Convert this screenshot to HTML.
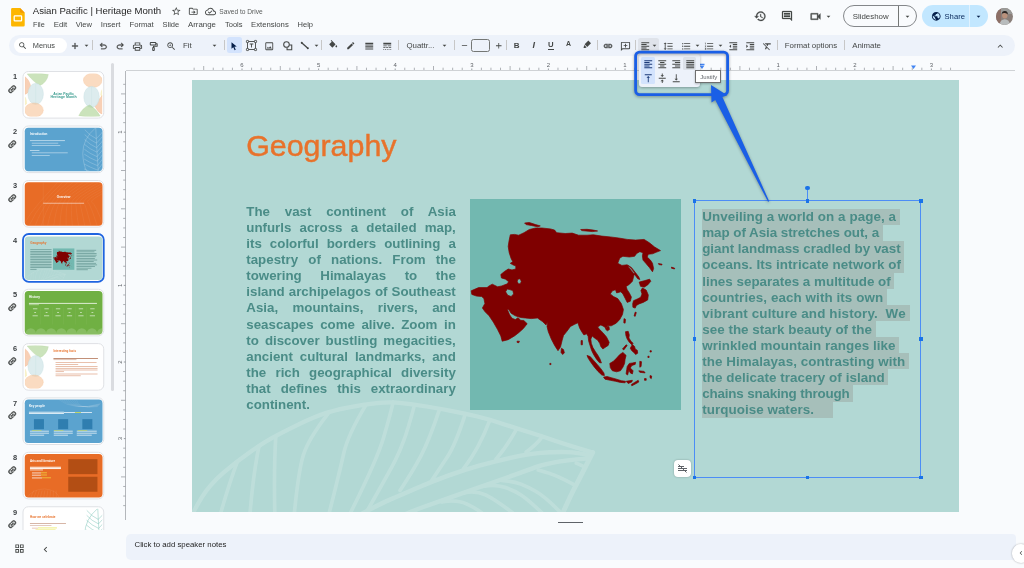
<!DOCTYPE html>
<html lang="en"><head><meta charset="utf-8"><title>Asian Pacific | Heritage Month - Google Slides</title>
<style>
html,body{margin:0;padding:0}
body{width:1024px;height:568px;overflow:hidden;background:#f9fbfd;font-family:"Liberation Sans",sans-serif;position:relative}
.t{position:absolute;white-space:pre;display:block}
.b{position:absolute}
.ic{position:absolute;display:block;overflow:visible}
#app{position:absolute;left:0;top:0;width:1024px;height:568px;overflow:hidden;will-change:transform}
svg text{font-family:"Liberation Sans",sans-serif}
.para{color:#4a8c87;font-weight:bold;white-space:nowrap}
.jl{text-align:justify;text-align-last:justify;height:16.07px}
.jl.last{text-align:left;text-align-last:left}
.num{font-size:7.4px;line-height:9px;color:#3c4043;text-align:center;font-weight:bold}
</style></head>
<body>
<div id="app">
<div id="header">
<svg class="ic" style="left:11.2px;top:8.300px" width="13.800" height="18.500" viewBox="0 0 14 19">
<path d="M1.3 0H9.2L14 4.8V17.7A1.3 1.3 0 0 1 12.7 19H1.3A1.3 1.3 0 0 1 0 17.700V1.300A1.300 1.300 0 0 1 1.300 0Z" fill="#fdb600"/>
<path d="M9.2 0L14 4.8H10.5A1.3 1.3 0 0 1 9.2 3.500Z" fill="#f29900"/>
<rect x="3.2" y="8.200" width="7.6" height="5" rx=".6" fill="none" stroke="#fff" stroke-width="1.300"/>
</svg>
<span class="t" style="left:32.80px;top:6.37px;font-size:9.60px;line-height:9.60px;color:#1f1f1f;">Asian Pacific | Heritage Month</span>
<svg class="ic" style="left:170.95px;top:6.45px" width="10.5" height="10.5" viewBox="0 0 24 24" ><path fill="#444746" d="M22 9.240l-7.190-.62L12 2 9.190 8.630 2 9.240l5.460 4.730L5.820 21 12 17.270 18.180 21l-1.630-7.030L22 9.240zM12 15.400l-3.760 2.270 1-4.280-3.320-2.880 4.380-.38L12 6.100l1.710 4.040 4.380.38-3.320 2.880 1 4.280L12 15.400z"/></svg>
<svg class="ic" style="left:187.75px;top:6.45px" width="10.5" height="10.5" viewBox="0 0 24 24" ><path fill="#444746" d="M20 6h-8l-2-2H4c-1.100 0-2 .9-2 2v12c0 1.100.9 2 2 2h16c1.100 0 2-.9 2-2V8c0-1.100-.9-2-2-2zm0 12H4V6h5.170l2 2H20v10zm-8-1.500l1.400 1.400L17.300 14l-3.900-3.900L12 11.500l1.500 1.500H8v2h5.500z"/></svg>
<svg class="ic" style="left:204.50px;top:6.40px" width="11" height="11" viewBox="0 0 24 24" ><path fill="#444746" d="M19.350 10.040C18.670 6.590 15.640 4 12 4 9.110 4 6.600 5.640 5.350 8.040 2.340 8.360 0 10.910 0 14c0 3.310 2.690 6 6 6h13c2.760 0 5-2.240 5-5 0-2.640-2.050-4.780-4.650-4.960zM19 18H6c-2.210 0-4-1.790-4-4 0-2.050 1.530-3.760 3.560-3.970l1.070-.11.5-.95C8.080 7.140 9.940 6 12 6c2.620 0 4.880 1.860 5.390 4.430l.3 1.500 1.530.11c1.560.1 2.780 1.410 2.780 2.960 0 1.650-1.350 3-3 3zm-9-3.820l-2.090-2.090L6.500 13.500 10 17l6.010-6.010-1.410-1.410z"/></svg>
<span class="t" style="left:219.30px;top:9.39px;font-size:6.63px;line-height:6.63px;color:#5a5d5c;">Saved to Drive</span>
<span class="t" style="left:33.00px;top:21.03px;font-size:7.29px;line-height:7.29px;color:#444746;">File</span>
<span class="t" style="left:53.75px;top:20.57px;font-size:7.83px;line-height:7.83px;color:#444746;">Edit</span>
<span class="t" style="left:75.75px;top:20.80px;font-size:7.56px;line-height:7.56px;color:#444746;">View</span>
<span class="t" style="left:100.75px;top:20.52px;font-size:7.90px;line-height:7.90px;color:#444746;">Insert</span>
<span class="t" style="left:129.50px;top:20.72px;font-size:7.66px;line-height:7.66px;color:#444746;">Format</span>
<span class="t" style="left:162.50px;top:20.82px;font-size:7.53px;line-height:7.53px;color:#444746;">Slide</span>
<span class="t" style="left:188.00px;top:20.54px;font-size:7.87px;line-height:7.87px;color:#444746;">Arrange</span>
<span class="t" style="left:225.00px;top:20.85px;font-size:7.50px;line-height:7.50px;color:#444746;">Tools</span>
<span class="t" style="left:251.00px;top:20.67px;font-size:7.72px;line-height:7.72px;color:#444746;">Extensions</span>
<span class="t" style="left:297.50px;top:20.82px;font-size:7.54px;line-height:7.54px;color:#444746;">Help</span>
<svg class="ic" style="left:754.35px;top:9.75px" width="12.5" height="12.5" viewBox="0 0 24 24" ><path fill="#444746" stroke="#444746" stroke-width="0.6" stroke-linejoin="round" d="M13 3c-4.970 0-9 4.030-9 9H1l3.890 3.890.07.14L9 12H6c0-3.870 3.130-7 7-7s7 3.130 7 7-3.130 7-7 7c-1.930 0-3.680-.79-4.940-2.060l-1.420 1.420C8.270 19.990 10.510 21 13 21c4.970 0 9-4.030 9-9s-4.030-9-9-9zm-1 5v5l4.280 2.540.72-1.210-3.500-2.080V8H12z"/></svg>
<svg class="ic" style="left:781.40px;top:10.30px" width="12" height="12" viewBox="0 0 24 24" ><path fill="#444746" stroke="#444746" stroke-width="0.5" stroke-linejoin="round" d="M21.990 4c0-1.100-.89-2-1.990-2H4c-1.100 0-2 .9-2 2v12c0 1.100.9 2 2 2h14l4 4-.01-18zM20 4v13.170L18.830 16H4V4h16zM6 12h12v2H6zm0-3h12v2H6zm0-3h12v2H6z"/></svg>
<svg class="ic" style="left:809.10px;top:9.50px" width="13" height="13" viewBox="0 0 24 24" ><path fill="#444746" stroke="#444746" stroke-width="0.6" stroke-linejoin="round" d="M15 8v8H5V8h10m1-2H4c-.55 0-1 .45-1 1v10c0 .55.45 1 1 1h12c.55 0 1-.45 1-1v-3.500l4 4v-11l-4 4V7c0-.55-.45-1-1-1z"/></svg>
<svg class="ic" style="left:824.20px;top:11.50px" width="9" height="9" viewBox="0 0 24 24" ><path fill="#444746" d="M7 10l5 5 5-5z"/></svg>
<div class="b" style="left:843.20px;top:5.00px;width:74.30px;height:21.80px;border-radius:11px;border:1px solid #84878a;box-sizing:border-box;"></div>
<div class="b" style="left:897.80px;top:5.50px;width:1.00px;height:20.80px;background:#747775;"></div>
<span class="t" style="left:852.70px;top:12.53px;font-size:7.88px;line-height:7.88px;color:#444746;">Slideshow</span>
<svg class="ic" style="left:902.80px;top:11.50px" width="9" height="9" viewBox="0 0 24 24" ><path fill="#444746" d="M7 10l5 5 5-5z"/></svg>
<div class="b" style="left:921.70px;top:5.00px;width:66.30px;height:21.80px;background:#c2e7ff;border-radius:11px;"></div>
<div class="b" style="left:969.30px;top:5.00px;width:1.00px;height:21.80px;background:#e0f2ff;"></div>
<svg class="ic" style="left:930.75px;top:10.75px" width="10.5" height="10.5" viewBox="0 0 24 24" ><path fill="#041e49" d="M12 2C6.480 2 2 6.480 2 12s4.480 10 10 10 10-4.480 10-10S17.520 2 12 2zm-1 17.930c-3.950-.49-7-3.850-7-7.930 0-.62.08-1.210.21-1.790L9 15v1c0 1.100.9 2 2 2v1.930zm6.900-2.540c-.26-.81-1-1.390-1.900-1.390h-1v-3c0-.55-.45-1-1-1H8v-2h2c.55 0 1-.45 1-1V7h2c1.100 0 2-.9 2-2v-.41c2.930 1.190 5 4.060 5 7.410 0 2.080-.8 3.970-2.100 5.390z"/></svg>
<span class="t" style="left:944.50px;top:12.70px;font-size:7.68px;line-height:7.68px;color:#0a2a5c;">Share</span>
<svg class="ic" style="left:974.00px;top:11.50px" width="9" height="9" viewBox="0 0 24 24" ><path fill="#041e49" d="M7 10l5 5 5-5z"/></svg>
<svg class="ic" style="left:996.2px;top:7.5px" width="17" height="17" viewBox="0 0 17 17">
<defs><clipPath id="av"><circle cx="8.5" cy="8.5" r="8.5"/></clipPath></defs>
<g clip-path="url(#av)"><rect width="17" height="17" fill="#8a7f7a"/>
<rect x="0" y="0" width="17" height="6" fill="#9a9a98"/>
<rect x="0" y="0" width="5" height="17" fill="#8d6f66"/>
<ellipse cx="8.8" cy="7.300" rx="2.700" ry="3.200" fill="#b9917c"/>
<path d="M5.600 6.300Q6 2.800 9 3Q12 3.200 11.800 6.500Q10.500 4.800 8.500 5Q6.500 5 5.600 6.300Z" fill="#2a2523"/>
<path d="M3.500 17Q4 11.500 8.800 11.200Q13.500 11.500 14 17Z" fill="#b8bcbd"/>
</g></svg>
</div>
<div id="toolbar">
<div class="b" style="left:9.00px;top:34.80px;width:1006.40px;height:21.20px;background:#edf2fa;border-radius:10.6px;"></div>
<div class="b" style="left:13.50px;top:37.80px;width:53.00px;height:15.20px;background:#fff;border-radius:7.6px;"></div>
<svg class="ic" style="left:17.85px;top:40.65px" width="9.5" height="9.5" viewBox="0 0 24 24" ><path fill="#444746" d="M15.5 14h-.79l-.28-.27C15.41 12.59 16 11.11 16 9.5 16 5.91 13.09 3 9.5 3S3 5.91 3 9.5 5.91 16 9.5 16c1.61 0 3.09-.59 4.23-1.57l.27.28v.79l5 4.99L20.49 19l-4.99-5zm-6 0C7.01 14 5 11.99 5 9.5S7.01 5 9.5 5 14 7.01 14 9.5 11.99 14 9.5 14z"/></svg>
<span class="t" style="left:32.80px;top:41.94px;font-size:7.40px;line-height:7.40px;color:#444746;">Menus</span>
<svg class="ic" style="left:70.30px;top:40.60px" width="10" height="10" viewBox="0 -960 960 960" ><path fill="#444746" stroke="#444746" stroke-width="30" stroke-linejoin="round" d="M440-440H200v-80h240v-240h80v240h240v80H520v240h-80v-240Z"/></svg>
<svg class="ic" style="left:82.30px;top:41.30px" width="9" height="9" viewBox="0 0 24 24" ><path fill="#444746" d="M7 10l5 5 5-5z"/></svg>
<div class="b" style="left:92.00px;top:40.25px;width:1.00px;height:10.00px;background:#c7c7c7;"></div>
<svg class="ic" style="left:97.75px;top:40.75px" width="10.5" height="10.5" viewBox="0 -960 960 960" ><path fill="#444746" stroke="#444746" stroke-width="20" stroke-linejoin="round" d="M280-200v-80h284q63 0 109.500-40T720-420q0-60-46.500-100T564-560H312l104 104-56 56-200-200 200-200 56 56-104 104h252q97 0 166.500 63T800-420q0 94-69.500 157T564-200H280Z"/></svg>
<svg class="ic" style="left:114.75px;top:40.75px" width="10.5" height="10.5" viewBox="0 -960 960 960" ><path fill="#444746" stroke="#444746" stroke-width="20" stroke-linejoin="round" d="M396-200q-97 0-166.500-63T160-420q0-94 69.500-157T396-640h252L544-744l56-56 200 200-200 200-56-56 104-104H396q-63 0-109.500 40T240-420q0 60 46.500 100T396-280h284v80H396Z"/></svg>
<svg class="ic" style="left:131.50px;top:40.50px" width="11" height="11" viewBox="0 -960 960 960" ><path fill="#444746" d="M640-640v-120H320v120h-80v-200h480v200h-80Zm-480 80h640-640Zm560 100q17 0 28.500-11.500T760-500q0-17-11.500-28.500T720-540q-17 0-28.500 11.500T680-500q0 17 11.500 28.500T720-460Zm-80 260v-160H320v160h320Zm80 80H240v-160H80v-240q0-51 35-85.500t85-34.500h560q51 0 85.500 34.500T880-520v240H720v160Zm80-240v-160q0-17-11.500-28.500T760-560H200q-17 0-28.500 11.500T160-520v160h80v-80h480v80h80Z"/></svg>
<svg class="ic" style="left:148.30px;top:40.60px" width="11" height="11" viewBox="0 0 24 24"><g fill="none" stroke="#444746" stroke-width="2.200" stroke-linejoin="round"><rect x="5" y="3.500" width="12" height="5" rx="1"/><path d="M17 6h3v5.500h-8V14"/><rect x="10.300" y="14" width="3.400" height="6.500" rx=".8"/></g></svg>
<svg class="ic" style="left:165.95px;top:40.75px" width="10.5" height="10.5" viewBox="0 0 24 24" ><path fill="#444746" d="M15.5 14h-.79l-.28-.27C15.41 12.59 16 11.11 16 9.5 16 5.91 13.09 3 9.5 3S3 5.91 3 9.5 5.91 16 9.5 16c1.61 0 3.09-.59 4.23-1.57l.27.28v.79l5 4.99L20.49 19l-4.99-5zm-6 0C7.01 14 5 11.99 5 9.5S7.01 5 9.5 5 14 7.01 14 9.5 11.99 14 9.5 14zm2.500-4h-2v2H9v-2H7V9h2V7h1v2h2v1z"/></svg>
<span class="t" style="left:183.00px;top:42.13px;font-size:7.88px;line-height:7.88px;color:#444746;">Fit</span>
<svg class="ic" style="left:210.30px;top:41.30px" width="9" height="9" viewBox="0 0 24 24" ><path fill="#444746" d="M7 10l5 5 5-5z"/></svg>
<div class="b" style="left:224.00px;top:40.25px;width:1.00px;height:10.00px;background:#c7c7c7;"></div>
<div class="b" style="left:226.80px;top:37.00px;width:15.70px;height:16.00px;background:#d3e3fd;border-radius:2.5px;"></div>
<svg class="ic" style="left:229.30px;top:40.80px" width="10" height="10" viewBox="0 0 24 24" ><path fill="#041e49" d="M6 3l12.5 10.2-5.6.5 3.3 7-2.7 1.3-3.2-7.1L6 18.800z"/></svg>
<svg class="ic" style="left:246.3px;top:40.3px" width="11" height="11" viewBox="0 0 11 11"><g fill="none" stroke="#444746" stroke-width=".9">
<rect x="1.500" y="1.500" width="8" height="8"/></g><g fill="#edf2fa" stroke="#444746" stroke-width=".8"><rect x=".4" y=".4" width="2.200" height="2.200" rx=".5"/><rect x="8.400" y=".4" width="2.200" height="2.200" rx=".5"/><rect x=".4" y="8.400" width="2.200" height="2.200" rx=".5"/><rect x="8.400" y="8.400" width="2.200" height="2.200" rx=".5"/></g>
<path fill="#444746" d="M3.700 3.600h3.600v.9H5.950v3H5.050v-3H3.700z"/></svg>
<svg class="ic" style="left:264.05px;top:40.55px" width="10.5" height="10.5" viewBox="0 0 24 24" ><path fill="#444746" d="M19 5v14H5V5h14m0-2H5c-1.100 0-2 .9-2 2v14c0 1.100.9 2 2 2h14c1.100 0 2-.9 2-2V5c0-1.100-.9-2-2-2zm-4.860 8.860l-3 3.870L9 13.140 6 17h12l-3.860-5.140z"/></svg>
<svg class="ic" style="left:282.800px;top:41px" width="9.800" height="9.800" viewBox="0 0 23 23"><g fill="none" stroke="#444746" stroke-width="2.500">
<circle cx="8.200" cy="8.200" r="6.600"/><path d="M15.500 9.500H20.500V20.500H9.500V15.800"/></g></svg>
<svg class="ic" style="left:300px;top:41px" width="10" height="10" viewBox="0 0 10 10"><path d="M1.700 1.700L7.800 7.300" stroke="#444746" stroke-width="1.300" stroke-linecap="round"/><circle cx="1.700" cy="1.700" r=".95" fill="#444746"/><circle cx="7.800" cy="7.300" r=".95" fill="#444746"/></svg>
<svg class="ic" style="left:311.80px;top:41.30px" width="9" height="9" viewBox="0 0 24 24" ><path fill="#444746" d="M7 10l5 5 5-5z"/></svg>
<div class="b" style="left:321.00px;top:40.25px;width:1.00px;height:10.00px;background:#c7c7c7;"></div>
<svg class="ic" style="left:327.55px;top:40.05px" width="10.5" height="10.5" viewBox="0 0 24 24"><path fill="#444746" d="M16.560 8.940L7.620 0 6.210 1.410l2.380 2.380-5.150 5.150c-.59.59-.59 1.540 0 2.120l5.500 5.500c.29.29.68.44 1.060.44s.77-.15 1.060-.44l5.500-5.500c.59-.58.59-1.530 0-2.120zM19 11.500s-2 2.170-2 3.500c0 1.100.9 2 2 2s2-.9 2-2c0-1.330-2-3.500-2-3.500z"/></svg>
<svg class="ic" style="left:346.05px;top:40.65px" width="9.5" height="9.5" viewBox="0 0 24 24" ><path fill="#444746" d="M3 17.250V21h3.750L17.810 9.940l-3.750-3.750L3 17.250zM20.710 7.040c.39-.39.39-1.020 0-1.410l-2.340-2.340c-.39-.39-1.020-.39-1.410 0l-1.830 1.830 3.750 3.750 1.830-1.830z"/></svg>
<svg class="ic" style="left:363.75px;top:40.55px" width="10.5" height="10.5" viewBox="0 0 24 24" ><path fill="#444746" d="M3 17h18v-2H3v2zm0 3h18v-1H3v1zm0-7h18v-3H3v3zm0-9v4h18V4H3z"/></svg>
<svg class="ic" style="left:381.75px;top:40.55px" width="10.5" height="10.5" viewBox="0 0 24 24" ><path fill="#444746" d="M3 16h5v-2H3v2zm6.500 0h5v-2h-5v2zm6.500 0h5v-2h-5v2zM3 20h2v-2H3v2zm4 0h2v-2H7v2zm4 0h2v-2h-2v2zm4 0h2v-2h-2v2zm4 0h2v-2h-2v2zM3 12h8v-2H3v2zm10 0h8v-2h-8v2zM3 4v4h18V4H3z"/></svg>
<div class="b" style="left:397.80px;top:40.25px;width:1.00px;height:10.00px;background:#c7c7c7;"></div>
<span class="t" style="left:406.50px;top:42.14px;font-size:7.87px;line-height:7.87px;color:#444746;">Quattr...</span>
<svg class="ic" style="left:439.80px;top:41.30px" width="9" height="9" viewBox="0 0 24 24" ><path fill="#444746" d="M7 10l5 5 5-5z"/></svg>
<div class="b" style="left:454.00px;top:40.25px;width:1.00px;height:10.00px;background:#c7c7c7;"></div>
<svg class="ic" style="left:460.00px;top:41.10px" width="9" height="9" viewBox="0 0 24 24" ><path fill="#444746" d="M19 13H5v-2h14v2z"/></svg>
<div class="b" style="left:471.20px;top:39.00px;width:18.60px;height:12.60px;border-radius:2.5px;border:1px solid #747775;box-sizing:border-box;"></div>
<svg class="ic" style="left:493.75px;top:40.85px" width="9.5" height="9.5" viewBox="0 -960 960 960" ><path fill="#444746" d="M440-440H200v-80h240v-240h80v240h240v80H520v240h-80v-240Z"/></svg>
<div class="b" style="left:505.80px;top:40.25px;width:1.00px;height:10.00px;background:#c7c7c7;"></div>
<span class="t" style="left:513.80px;top:41.50px;font-size:8.03px;line-height:8.03px;color:#444746;font-weight:bold;">B</span>
<span class="t" style="left:532.50px;top:40.69px;font-size:8.99px;line-height:8.99px;color:#444746;font-weight:bold;font-style:italic;">I</span>
<span class="t" style="left:548.00px;top:41.04px;font-size:7.75px;line-height:7.75px;color:#444746;font-weight:bold;">U</span>
<div class="b" style="left:547.60px;top:49.00px;width:6.40px;height:1.00px;background:#444746;"></div>
<span class="t" style="left:566.00px;top:41.14px;font-size:6.92px;line-height:6.92px;color:#444746;font-weight:bold;">A</span>
<svg class="ic" style="left:581.55px;top:39.35px" width="10.5" height="10.5" viewBox="0 0 24 24"><path fill="#444746" d="M14.500 3.500l6 6-8.500 8.500-6-6z"/><path fill="#444746" d="M5 13.500l5.500 5.500-3 1.500H3.500z"/></svg>
<div class="b" style="left:597.00px;top:40.25px;width:1.00px;height:10.00px;background:#c7c7c7;"></div>
<svg class="ic" style="left:602.80px;top:40.70px" width="10" height="10" viewBox="0 0 24 24" ><path fill="#444746" stroke="#444746" stroke-width="0.9" stroke-linejoin="round" d="M3.900 12c0-1.710 1.390-3.100 3.100-3.100h4V7H7c-2.760 0-5 2.240-5 5s2.240 5 5 5h4v-1.900H7c-1.710 0-3.100-1.390-3.100-3.100zM8 13h8v-2H8v2zm9-6h-4v1.900h4c1.710 0 3.100 1.390 3.100 3.100s-1.390 3.100-3.100 3.100h-4V17h4c2.760 0 5-2.240 5-5s-2.240-5-5-5z"/></svg>
<svg class="ic" style="left:619.50px;top:40.50px" width="11" height="11" viewBox="0 0 24 24" ><path fill="#444746" d="M20 2H4c-1.100 0-2 .9-2 2v18l4-4h14c1.100 0 2-.9 2-2V4c0-1.100-.9-2-2-2zm0 14H5.170L4 17.170V4h16v12zM11 14h2v-3h3V9h-3V6h-2v3H8v2h3z"/></svg>
<div class="b" style="left:635.30px;top:40.25px;width:1.00px;height:10.00px;background:#c7c7c7;"></div>
<div class="b" style="left:638.00px;top:37.50px;width:20.50px;height:15.50px;background:#dfe3ea;border-radius:2.5px;"></div>
<svg class="ic" style="left:639.55px;top:40.75px" width="10.5" height="10.5" viewBox="0 0 24 24" ><path fill="#444746" d="M15 15H3v2h12v-2zm0-8H3v2h12V7zM3 13h18v-2H3v2zm0 8h18v-2H3v2zM3 3v2h18V3H3z"/></svg>
<svg class="ic" style="left:650.00px;top:41.30px" width="9" height="9" viewBox="0 0 24 24" ><path fill="#444746" d="M7 10l5 5 5-5z"/></svg>
<svg class="ic" style="left:663.05px;top:40.75px" width="10.5" height="10.5" viewBox="0 0 24 24" ><path fill="#444746" d="M6 7h2.500L5 3.500 1.500 7H4v10H1.500L5 20.500 8.500 17H6V7zm4-2v2h12V5H10zm0 14h12v-2H10v2zm0-6h12v-2H10v2z"/></svg>
<svg class="ic" style="left:680.55px;top:40.75px" width="10.5" height="10.5" viewBox="0 0 24 24" ><path fill="#444746" d="M4 10.500c-.83 0-1.500.67-1.500 1.500s.67 1.500 1.500 1.500 1.500-.67 1.500-1.500-.67-1.500-1.500-1.500zm0-6c-.83 0-1.500.67-1.500 1.500S3.170 7.500 4 7.500 5.500 6.830 5.500 6 4.830 4.500 4 4.500zm0 12c-.83 0-1.500.68-1.500 1.500s.68 1.500 1.500 1.500 1.500-.68 1.500-1.500-.67-1.500-1.500-1.500zM7 19h14v-2H7v2zm0-6h14v-2H7v2zm0-8v2h14V5H7z"/></svg>
<svg class="ic" style="left:692.50px;top:41.30px" width="9" height="9" viewBox="0 0 24 24" ><path fill="#444746" d="M7 10l5 5 5-5z"/></svg>
<svg class="ic" style="left:704.05px;top:40.75px" width="10.5" height="10.5" viewBox="0 0 24 24" ><path fill="#444746" d="M2 17h2v.5H3v1h1v.5H2v1h3v-4H2v1zm1-9h1V4H2v1h1v3zm-1 3h1.800L2 13.100v.9h3v-1H3.200L5 10.900V10H2v1zm5-6v2h14V5H7zm0 14h14v-2H7v2zm0-6h14v-2H7v2z"/></svg>
<svg class="ic" style="left:716.00px;top:41.30px" width="9" height="9" viewBox="0 0 24 24" ><path fill="#444746" d="M7 10l5 5 5-5z"/></svg>
<svg class="ic" style="left:727.55px;top:40.75px" width="10.5" height="10.5" viewBox="0 0 24 24" ><path fill="#444746" d="M11 17h10v-2H11v2zm-8-5l4 4V8l-4 4zm0 9h18v-2H3v2zM3 3v2h18V3H3zm8 6h10V7H11v2zm0 4h10v-2H11v2z"/></svg>
<svg class="ic" style="left:744.55px;top:40.75px" width="10.5" height="10.5" viewBox="0 0 24 24" ><path fill="#444746" d="M3 21h18v-2H3v2zM3 8v8l4-4-4-4zm8 9h10v-2H11v2zM3 3v2h18V3H3zm8 6h10V7H11v2zm0 4h10v-2H11v2z"/></svg>
<svg class="ic" style="left:761.55px;top:40.75px" width="10.5" height="10.5" viewBox="0 0 24 24" ><path fill="#444746" d="M3.270 5L2 6.270l6.970 6.970L6.500 19h3l1.570-3.660L16.730 21 18 19.730 3.550 5.270 3.270 5zM6 5v.18L8.820 8h2.400l-.72 1.680 2.100 2.100L14.210 8H20V5H6z"/></svg>
<div class="b" style="left:777.00px;top:40.25px;width:1.00px;height:10.00px;background:#c7c7c7;"></div>
<span class="t" style="left:784.75px;top:42.14px;font-size:7.87px;line-height:7.87px;color:#444746;">Format options</span>
<div class="b" style="left:844.00px;top:40.25px;width:1.00px;height:10.00px;background:#c7c7c7;"></div>
<span class="t" style="left:852.25px;top:42.17px;font-size:7.84px;line-height:7.84px;color:#444746;">Animate</span>
<svg class="ic" style="left:995.25px;top:40.75px" width="10.5" height="10.5" viewBox="0 0 24 24" ><path fill="#444746" d="M12 8l-6 6 1.410 1.410L12 10.830l4.590 4.580L18 14z"/></svg>
</div>
<svg class="ic" style="left:0;top:56px" width="1024" height="16" viewBox="0 56 1024 16"><rect x="126" y="70" width="889" height="1" fill="#cfd2d5"/><path d="M194.13 67.70V70 M203.70 66.00V70 M213.28 67.70V70 M222.85 67.70V70 M232.43 67.70V70 M251.58 67.70V70 M261.15 67.70V70 M270.73 67.70V70 M280.30 66.00V70 M289.88 67.70V70 M299.45 67.70V70 M309.03 67.70V70 M328.18 67.70V70 M337.75 67.70V70 M347.33 67.70V70 M356.90 66.00V70 M366.48 67.70V70 M376.05 67.70V70 M385.63 67.70V70 M404.78 67.70V70 M414.35 67.70V70 M423.93 67.70V70 M433.50 66.00V70 M443.08 67.70V70 M452.65 67.70V70 M462.23 67.70V70 M481.38 67.70V70 M490.95 67.70V70 M500.53 67.70V70 M510.10 66.00V70 M519.68 67.70V70 M529.25 67.70V70 M538.83 67.70V70 M557.98 67.70V70 M567.55 67.70V70 M577.12 67.70V70 M586.70 66.00V70 M596.28 67.70V70 M605.85 67.70V70 M615.43 67.70V70 M634.58 67.70V70 M644.15 67.70V70 M653.73 67.70V70 M663.30 66.00V70 M672.88 67.70V70 M682.45 67.70V70 M692.02 67.70V70 M711.18 67.70V70 M720.75 67.70V70 M730.33 67.70V70 M739.90 66.00V70 M749.48 67.70V70 M759.05 67.70V70 M768.62 67.70V70 M787.77 67.70V70 M797.35 67.70V70 M806.92 67.70V70 M816.50 66.00V70 M826.08 67.70V70 M835.65 67.70V70 M845.23 67.70V70 M864.38 67.70V70 M873.95 67.70V70 M883.52 67.70V70 M893.10 66.00V70 M902.67 67.70V70 M912.25 67.70V70 M921.83 67.70V70 M940.98 67.70V70 M950.55 67.70V70" stroke="#9a9ea3" stroke-width=".8" fill="none"/><text x="242.00" y="67.300" font-size="6" text-anchor="middle" fill="#5f6368" font-family='"Liberation Sans", sans-serif'>6</text><path d="M242.00 68.5V70" stroke="#80868b" stroke-width=".8"/><text x="318.60" y="67.300" font-size="6" text-anchor="middle" fill="#5f6368" font-family='"Liberation Sans", sans-serif'>5</text><path d="M318.60 68.5V70" stroke="#80868b" stroke-width=".8"/><text x="395.20" y="67.300" font-size="6" text-anchor="middle" fill="#5f6368" font-family='"Liberation Sans", sans-serif'>4</text><path d="M395.20 68.5V70" stroke="#80868b" stroke-width=".8"/><text x="471.80" y="67.300" font-size="6" text-anchor="middle" fill="#5f6368" font-family='"Liberation Sans", sans-serif'>3</text><path d="M471.80 68.5V70" stroke="#80868b" stroke-width=".8"/><text x="548.40" y="67.300" font-size="6" text-anchor="middle" fill="#5f6368" font-family='"Liberation Sans", sans-serif'>2</text><path d="M548.40 68.5V70" stroke="#80868b" stroke-width=".8"/><text x="625.00" y="67.300" font-size="6" text-anchor="middle" fill="#5f6368" font-family='"Liberation Sans", sans-serif'>1</text><path d="M625.00 68.5V70" stroke="#80868b" stroke-width=".8"/><text x="778.20" y="67.300" font-size="6" text-anchor="middle" fill="#5f6368" font-family='"Liberation Sans", sans-serif'>1</text><path d="M778.20 68.5V70" stroke="#80868b" stroke-width=".8"/><text x="854.80" y="67.300" font-size="6" text-anchor="middle" fill="#5f6368" font-family='"Liberation Sans", sans-serif'>2</text><path d="M854.80 68.5V70" stroke="#80868b" stroke-width=".8"/><text x="931.40" y="67.300" font-size="6" text-anchor="middle" fill="#5f6368" font-family='"Liberation Sans", sans-serif'>3</text><path d="M931.40 68.5V70" stroke="#80868b" stroke-width=".8"/><path d="M699.5 63.800h5v1.200h-5zM699.500 65.500h5l-2.500 3.500z" fill="#4285f4"/><path d="M911 65.500h5l-2.500 3.500z" fill="#4285f4"/></svg>
<svg class="ic" style="left:116px;top:71px" width="11" height="450" viewBox="116 71 11 450"><rect x="125" y="71" width="1" height="449" fill="#b4b7bb"/><path d="M123.20 84.33H125.5 M121.00 93.90H125.5 M123.20 103.48H125.5 M123.20 113.05H125.5 M123.20 122.63H125.5 M123.20 141.78H125.5 M123.20 151.35H125.5 M123.20 160.93H125.5 M121.00 170.50H125.5 M123.20 180.08H125.5 M123.20 189.65H125.5 M123.20 199.23H125.5 M121.00 208.80H125.5 M123.20 218.38H125.5 M123.20 227.95H125.5 M123.20 237.53H125.5 M121.00 247.10H125.5 M123.20 256.68H125.5 M123.20 266.25H125.5 M123.20 275.82H125.5 M123.20 294.98H125.5 M123.20 304.55H125.5 M123.20 314.12H125.5 M121.00 323.70H125.5 M123.20 333.27H125.5 M123.20 342.85H125.5 M123.20 352.43H125.5 M123.20 371.57H125.5 M123.20 381.15H125.5 M123.20 390.73H125.5 M121.00 400.30H125.5 M123.20 409.88H125.5 M123.20 419.45H125.5 M123.20 429.02H125.5 M123.20 448.17H125.5 M123.20 457.75H125.5 M123.20 467.32H125.5 M121.00 476.90H125.5 M123.20 486.47H125.5 M123.20 496.05H125.5 M123.20 505.62H125.5" stroke="#9a9ea3" stroke-width=".8" fill="none"/><text transform="translate(121.800 132.20) rotate(-90)" font-size="6" text-anchor="middle" fill="#5f6368" font-family='"Liberation Sans", sans-serif'>1</text><path d="M123.800 132.20H125.5" stroke="#80868b" stroke-width=".8"/><text transform="translate(121.800 285.40) rotate(-90)" font-size="6" text-anchor="middle" fill="#5f6368" font-family='"Liberation Sans", sans-serif'>1</text><path d="M123.800 285.40H125.5" stroke="#80868b" stroke-width=".8"/><text transform="translate(121.800 362.00) rotate(-90)" font-size="6" text-anchor="middle" fill="#5f6368" font-family='"Liberation Sans", sans-serif'>2</text><path d="M123.800 362.00H125.5" stroke="#80868b" stroke-width=".8"/><text transform="translate(121.800 438.60) rotate(-90)" font-size="6" text-anchor="middle" fill="#5f6368" font-family='"Liberation Sans", sans-serif'>3</text><path d="M123.800 438.60H125.5" stroke="#80868b" stroke-width=".8"/></svg>
<div class="b" style="left:110.50px;top:62.50px;width:3.90px;height:328.50px;background:#dadce0;border-radius:2px;"></div>
<div id="filmstrip" class="b" style="left:0;top:57px;width:118px;height:472.8px;overflow:hidden">
<div class="b num" style="left:9px;top:15.30px;width:12px">1</div>
<svg class="ic" style="left:7.300px;top:27.00px" width="10.400" height="10.400" viewBox="0 0 24 24"><g transform="rotate(-45 12 12)"><path fill="#444746" stroke="#444746" stroke-width="1.300" d="M3.900 12c0-1.710 1.390-3.100 3.100-3.100h4V7H7c-2.760 0-5 2.240-5 5s2.240 5 5 5h4v-1.900H7c-1.710 0-3.100-1.390-3.100-3.100zM8 13h8v-2H8v2zm9-6h-4v1.900h4c1.710 0 3.100 1.390 3.100 3.100s-1.390 3.100-3.100 3.100h-4V17h4c2.760 0 5-2.240 5-5s-2.240-5-5-5z"/></g></svg>
<svg class="ic" style="left:20px;top:11px" width="88" height="56" viewBox="0 0 88 56"><defs><clipPath id="tc1"><rect x="4.750" y="5.15" width="77.750" height="43.500" rx="3.600"/></clipPath></defs><rect x="3" y="3.50" width="80.750" height="46.600" rx="5.300" fill="#fff" stroke="#dfe1e5" stroke-width="1"/><g clip-path="url(#tc1)"><rect x="4" y="4.00" width="80" height="46" fill="#fff"/><svg x="4.750" y="5.15" width="77.750" height="43.500" viewBox="0 0 777.500 435" preserveAspectRatio="none"><path d="M22 6Q130 -8 236 14Q222 92 152 124Q96 96 22 6Z" fill="#a9d08e" stroke="#7ab55c" stroke-width="3" opacity=".6"/><path d="M0 34Q52 70 64 150Q40 200 0 214Z" fill="#f4b48a" stroke="#ee8a4c" stroke-width="3" opacity=".62"/><path d="M0 230Q20 250 22 300Q10 320 0 324Z" fill="#f3e9a6" opacity=".62"/><ellipse cx="109" cy="208" rx="78" ry="106" fill="#dcecee" stroke="#b9d7db" stroke-width="3" opacity=".95"/><path d="M109 104V312" stroke="#b9d7db" stroke-width="2" fill="none"/><ellipse cx="92" cy="370" rx="94" ry="72" fill="#f8c9a2" stroke="#f0a060" stroke-width="3" opacity=".66"/><ellipse cx="680" cy="72" rx="94" ry="72" fill="#f8c9a2" stroke="#f0a060" stroke-width="3" opacity=".66"/><path d="M777 150Q760 170 756 215Q766 235 777 240Z" fill="#f3e9a6" opacity=".62"/><path d="M777 220Q725 270 700 330Q735 400 777 410Z" fill="#f4b48a" stroke="#ee8a4c" stroke-width="3" opacity=".62"/><ellipse cx="668" cy="238" rx="78" ry="106" fill="#dcecee" stroke="#b9d7db" stroke-width="3" opacity=".95"/><path d="M668 134V342" stroke="#b9d7db" stroke-width="2" fill="none"/><path d="M540 425Q580 340 650 318Q720 360 756 432Q640 448 540 425Z" fill="#a9d08e" stroke="#7ab55c" stroke-width="3" opacity=".6"/><text x="388.5" y="214" font-size="30" fill="#3a9c8f" font-weight="bold" text-anchor="middle" textLength="208" lengthAdjust="spacingAndGlyphs">Asian Pacific</text><text x="388.5" y="252" font-size="30" fill="#3a9c8f" font-weight="bold" text-anchor="middle" textLength="262" lengthAdjust="spacingAndGlyphs">Heritage Month</text></svg></g></svg>
<div class="b num" style="left:9px;top:69.80px;width:12px">2</div>
<svg class="ic" style="left:7.300px;top:81.50px" width="10.400" height="10.400" viewBox="0 0 24 24"><g transform="rotate(-45 12 12)"><path fill="#444746" stroke="#444746" stroke-width="1.300" d="M3.900 12c0-1.710 1.390-3.100 3.100-3.100h4V7H7c-2.760 0-5 2.240-5 5s2.240 5 5 5h4v-1.900H7c-1.710 0-3.100-1.390-3.100-3.100zM8 13h8v-2H8v2zm9-6h-4v1.900h4c1.710 0 3.100 1.390 3.100 3.100s-1.390 3.100-3.100 3.100h-4V17h4c2.760 0 5-2.240 5-5s-2.240-5-5-5z"/></g></svg>
<svg class="ic" style="left:20px;top:65px" width="88" height="56" viewBox="0 0 88 56"><defs><clipPath id="tc2"><rect x="4.750" y="5.65" width="77.750" height="43.500" rx="3.600"/></clipPath></defs><rect x="3" y="4.00" width="80.750" height="46.600" rx="5.300" fill="#fff" stroke="#dfe1e5" stroke-width="1"/><g clip-path="url(#tc2)"><rect x="4" y="4.50" width="80" height="46" fill="#5ba3cf"/><svg x="4.750" y="5.65" width="77.750" height="43.500" viewBox="0 0 777.500 435" preserveAspectRatio="none"><g fill="none" stroke="#fff" stroke-width="3.5" opacity="0.6" transform="translate(560 0)"><path d="M150 0Q20 110 20 260Q25 370 60 437"/><path d="M150 0Q160 220 175 437"/><path d="M155 110Q90 80 40 20"/><path d="M155 110Q200 70 250 0"/><path d="M157 155Q90 125 39 69"/><path d="M157 155Q200 115 250 45"/><path d="M159 200Q90 170 38 118"/><path d="M159 200Q200 160 250 90"/><path d="M161 245Q90 215 37 167"/><path d="M161 245Q200 205 250 135"/><path d="M163 290Q90 260 36 216"/><path d="M163 290Q200 250 250 180"/><path d="M165 335Q90 305 35 265"/><path d="M165 335Q200 295 250 225"/><path d="M167 380Q90 350 34 314"/><path d="M167 380Q200 340 250 270"/><path d="M169 425Q90 395 33 363"/><path d="M169 425Q200 385 250 315"/><path d="M171 470Q90 440 32 412"/><path d="M171 470Q200 430 250 360"/></g><text x="52" y="72" font-size="27" fill="#fff" font-weight="bold" text-anchor="start" textLength="175" lengthAdjust="spacingAndGlyphs">Introduction</text><rect x="52" y="128" width="350" height="6" fill="#fff" opacity="0.9"/><rect x="70" y="152" width="265" height="5" fill="#fff" opacity="0.85"/><rect x="70" y="176" width="285" height="5" fill="#fff" opacity="0.85"/><rect x="52" y="226" width="95" height="6" fill="#fff" opacity="0.9"/><rect x="70" y="250" width="360" height="5" fill="#fff" opacity="0.85"/><rect x="70" y="276" width="180" height="5" fill="#fff" opacity="0.85"/></svg></g></svg>
<div class="b num" style="left:9px;top:124.30px;width:12px">3</div>
<svg class="ic" style="left:7.300px;top:136.00px" width="10.400" height="10.400" viewBox="0 0 24 24"><g transform="rotate(-45 12 12)"><path fill="#444746" stroke="#444746" stroke-width="1.300" d="M3.900 12c0-1.710 1.390-3.100 3.100-3.100h4V7H7c-2.760 0-5 2.240-5 5s2.240 5 5 5h4v-1.900H7c-1.710 0-3.100-1.390-3.100-3.100zM8 13h8v-2H8v2zm9-6h-4v1.900h4c1.710 0 3.100 1.390 3.100 3.100s-1.390 3.100-3.100 3.100h-4V17h4c2.760 0 5-2.240 5-5s-2.240-5-5-5z"/></g></svg>
<svg class="ic" style="left:20px;top:120px" width="88" height="56" viewBox="0 0 88 56"><defs><clipPath id="tc3"><rect x="4.750" y="5.15" width="77.750" height="43.500" rx="3.600"/></clipPath></defs><rect x="3" y="3.50" width="80.750" height="46.600" rx="5.300" fill="#fff" stroke="#dfe1e5" stroke-width="1"/><g clip-path="url(#tc3)"><rect x="4" y="4.00" width="80" height="46" fill="#e86c26"/><svg x="4.750" y="5.15" width="77.750" height="43.500" viewBox="0 0 777.500 435" preserveAspectRatio="none"><g fill="none" stroke="#fff" stroke-opacity=".13" stroke-width="4"><path d="M-20 437Q60 300 150 200T330 0" /><path d="M42 437Q110 294 190 200T382 0" /><path d="M104 437Q160 288 230 200T434 0" /><path d="M166 437Q210 282 270 200T486 0" /><path d="M228 437Q260 276 310 200T538 0" /><path d="M290 437Q310 270 350 200T590 0" /><path d="M352 437Q360 264 390 200T642 0" /><path d="M414 437Q410 258 430 200T694 0" /><path d="M476 437Q460 252 470 200T746 0" /><path d="M538 437Q510 246 510 200T798 0" /><path d="M600 437Q560 240 550 200T850 0" /><path d="M662 437Q610 234 590 200T902 0" /><path d="M724 437Q660 228 630 200T954 0" /><path d="M786 437Q710 222 670 200T1006 0" /><path d="M185 0V437"/></g><text x="388.5" y="160" font-size="27" fill="#fff" font-weight="bold" text-anchor="middle" textLength="135" lengthAdjust="spacingAndGlyphs">Overview</text><rect x="184.5" y="207" width="408" height="6" fill="#fff" opacity="0.85"/></svg></g></svg>
<div class="b num" style="left:9px;top:178.55px;width:12px">4</div>
<svg class="ic" style="left:20px;top:174px" width="88" height="56" viewBox="0 0 88 56"><defs><clipPath id="tc4"><rect x="4.750" y="5.40" width="77.750" height="43.500" rx="3.600"/></clipPath></defs><rect x="3" y="3.00" width="80.750" height="47.900" rx="5.800" fill="#fff" stroke="#1f64e0" stroke-width="1.800"/><g clip-path="url(#tc4)"><rect x="4" y="4.25" width="80" height="46" fill="#b2d8d4"/><svg x="4.750" y="5.40" width="77.750" height="43.500" viewBox="0 0 777.500 435" preserveAspectRatio="none"><g transform="scale(1.0144)"><g opacity=".155" fill="none" stroke="#fff" stroke-linecap="round" stroke-linejoin="round"><path stroke-width="4.200" d="M-2.0 439.8Q1.9 430.2 9.8 417.4Q17.7 404.6 31.5 392.7Q45.3 380.9 58.2 372.0Q71.0 363.1 78.9 358.7Q86.8 354.2 101.6 346.9Q116.3 339.4 128.2 335.0Q140.0 330.6 155.8 327.6Q171.6 324.6 184.8 323.2Q198.0 321.8 209.9 323.1Q221.8 324.4 234.6 326.5Q247.4 328.6 260.2 331.1Q273.1 333.6 285.4 336.5Q297.7 339.4 311.0 343.9Q324.4 348.4 337.2 352.3Q350.0 356.2 362.9 360.7Q375.7 365.1 400.7 372.4"/><path stroke-width="4.800" d="M400.7 372.4Q394.3 385.1 390.5 392.7Q386.7 400.4 382.9 407.3Q379.1 414.2 370.0 434.8"/><path stroke-width="4.400" d="M166.0 435.8Q188.0 423.8 198.0 419.6Q208.0 415.6 223.8 408.6Q239.7 401.6 255.5 395.9Q271.4 390.1 287.2 385.7Q303.1 381.2 319.6 377.6Q336.0 373.9 348.7 372.9Q361.4 371.8 374.1 372.1Q386.7 372.4 396.0 375.2"/><path stroke-width="4.400" d="M210.0 435.8Q218.1 431.8 232.1 426.8Q246.0 421.9 258.7 417.4Q271.4 412.9 287.2 407.2Q303.1 401.6 319.6 395.9Q336.0 390.1 342.4 387.6Q348.7 385.1 361.4 382.6Q374.0 380.1 394.0 378.6"/><path stroke-width="3.600" d="M45.3 381.9Q37.4 402.6 28.5 433.8"/><path stroke-width="3.600" d="M67.0 366.1Q61.1 394.8 58.0 433.8"/><path stroke-width="3.600" d="M83.8 356.2Q81.8 388.8 82.8 433.8"/><path stroke-width="3.600" d="M136.1 333.6Q116.3 359.1 111.4 374.9Q106.5 390.8 102.3 433.8"/><path stroke-width="3.600" d="M173.5 325.6Q155.8 355.2 151.8 373.0Q147.9 390.8 137.0 433.8"/><path stroke-width="3.600" d="M201.2 322.1Q198.0 335.6 191.7 357.2Q185.4 378.9 158.0 433.8"/><path stroke-width="3.600" d="M221.8 327.6Q215.9 349.4 211.9 360.2Q208.0 371.1 203.0 380.9Q198.0 390.8 173.5 433.8"/><path stroke-width="3.600" d="M247.4 329.6Q237.6 359.1 229.2 375.3Q220.7 391.4 208.0 410.4"/><path stroke-width="3.600" d="M273.1 334.6Q263.2 365.1 255.6 376.4Q248.0 387.8 239.7 400.4"/><path stroke-width="3.600" d="M297.7 340.4Q286.9 369.1 271.4 388.9"/><path stroke-width="3.600" d="M324.4 349.4Q314.5 367.1 304.0 379.2"/><path stroke-width="3.600" d="M350.0 357.2Q344.1 365.1 334.0 372.2"/><path stroke-width="3.600" d="M384.2 383.1L390.5 385.8"/><path stroke-width="3.600" d="M346.2 390.1Q358.8 393.4 366.4 396.9Q374.0 400.4 382.5 404.8"/><path stroke-width="3.600" d="M309.4 400.4Q322.0 401.6 329.0 404.1Q336.0 406.8 344.5 411.8Q353.0 416.8 368.0 431.8"/><path stroke-width="3.600" d="M290.4 406.6Q303.0 404.1 312.5 407.3Q322.0 410.4 329.0 414.9Q336.0 419.4 351.0 433.8"/><path stroke-width="3.600" d="M271.4 412.9Q284.0 410.4 293.5 414.9Q303.0 419.4 322.0 433.8"/><path stroke-width="3.600" d="M249.8 421.9Q265.0 419.4 274.5 423.8Q284.0 428.1 291.0 433.8"/></g><text x="55" y="75.75" font-size="30" fill="#e8722b" font-weight="bold">Geography</text><rect x="54.5" y="127.8" width="210" height="7" fill="#4a7f7b" opacity=".75"/><rect x="54.5" y="143.8" width="210" height="7" fill="#4a7f7b" opacity=".75"/><rect x="54.5" y="159.9" width="210" height="7" fill="#4a7f7b" opacity=".75"/><rect x="54.5" y="176.0" width="210" height="7" fill="#4a7f7b" opacity=".75"/><rect x="54.5" y="192.0" width="210" height="7" fill="#4a7f7b" opacity=".75"/><rect x="54.5" y="208.1" width="210" height="7" fill="#4a7f7b" opacity=".75"/><rect x="54.5" y="224.2" width="210" height="7" fill="#4a7f7b" opacity=".75"/><rect x="54.5" y="240.2" width="210" height="7" fill="#4a7f7b" opacity=".75"/><rect x="54.5" y="256.3" width="210" height="7" fill="#4a7f7b" opacity=".75"/><rect x="54.5" y="272.4" width="210" height="7" fill="#4a7f7b" opacity=".75"/><rect x="54.5" y="288.4" width="210" height="7" fill="#4a7f7b" opacity=".75"/><rect x="54.5" y="304.5" width="210" height="7" fill="#4a7f7b" opacity=".75"/><rect x="54.5" y="320.6" width="62" height="7" fill="#4a7f7b" opacity=".75"/><rect x="510" y="132.8" width="194" height="7" fill="#4a7f7b" opacity=".75"/><rect x="510" y="148.8" width="177" height="7" fill="#4a7f7b" opacity=".75"/><rect x="510" y="164.9" width="198" height="7" fill="#4a7f7b" opacity=".75"/><rect x="510" y="181.0" width="199" height="7" fill="#4a7f7b" opacity=".75"/><rect x="510" y="197.0" width="189" height="7" fill="#4a7f7b" opacity=".75"/><rect x="510" y="213.1" width="181" height="7" fill="#4a7f7b" opacity=".75"/><rect x="510" y="229.2" width="204" height="7" fill="#4a7f7b" opacity=".75"/><rect x="510" y="245.2" width="170" height="7" fill="#4a7f7b" opacity=".75"/><rect x="510" y="261.3" width="193" height="7" fill="#4a7f7b" opacity=".75"/><rect x="510" y="277.4" width="203" height="7" fill="#4a7f7b" opacity=".75"/><rect x="510" y="293.4" width="182" height="7" fill="#4a7f7b" opacity=".75"/><rect x="510" y="309.5" width="147" height="7" fill="#4a7f7b" opacity=".75"/><rect x="510" y="325.6" width="112" height="7" fill="#4a7f7b" opacity=".75"/><rect x="278.1" y="118.8" width="210.9" height="210.5" fill="#72b8b0"/><path transform="translate(278.1 118.8)" fill="#7f0000" fill-rule="evenodd" d="M40.3 35.8L44.5 35.4L48.7 36.2L54.0 33.7L59.3 30.5L65.6 29.0L72.0 29.0L80.4 29.9L84.6 31.1L86.7 33.7L95.2 34.5L102.2 34.1L108.6 36.2L117.0 36.2L123.4 35.8L131.8 37.1L140.3 37.9L148.7 39.0L157.2 40.4L165.6 41.1L174.1 40.4L179.4 43.8L184.6 48.0L190.5 51.6L186.7 53.1L182.5 54.8L178.3 55.2L177.2 58.0L180.4 61.1L182.5 64.3L183.6 69.6L182.5 72.8L179.4 68.5L175.8 64.3L173.0 61.1L172.4 56.9L173.0 53.7L169.8 52.7L166.7 54.4L164.6 57.3L159.3 58.0L152.9 57.3L149.8 59.0L147.7 64.3L151.9 66.4L157.2 65.8L161.4 69.6L164.6 73.8L163.5 78.0L162.4 82.3L159.3 85.4L156.1 87.5L157.2 90.7L159.3 93.9L161.4 98.1L160.3 102.3L157.2 103.4L155.1 99.2L152.9 94.9L150.8 92.8L146.6 93.9L145.5 90.7L142.4 91.8L140.3 94.9L143.4 97.5L147.7 99.6L151.3 104.5L153.4 110.5L152.5 115.4L149.8 120.4L146.2 124.2L141.3 126.8L137.7 126.8L136.0 129.5L133.9 127.4L130.8 125.9L127.6 128.0L129.7 130.6L132.9 133.7L136.5 138.0L139.2 143.3L138.2 146.4L135.0 148.5L132.9 150.0L130.8 147.5L129.7 144.3L127.6 141.1L124.4 139.0L122.3 136.9L120.8 140.1L121.3 144.3L122.9 148.5L125.5 152.8L128.0 156.4L130.1 160.2L131.4 164.0L129.3 163.5L126.5 160.2L123.8 155.9L121.7 151.7L120.2 147.1L118.7 142.2L118.1 137.3L116.6 134.8L113.9 135.9L111.7 132.7L109.6 128.9L107.9 123.8L104.7 125.3L100.5 127.4L96.9 132.3L93.5 136.5L92.2 141.1L90.5 147.9L88.0 151.7L84.6 146.4L81.3 140.1L78.3 132.7L77.0 127.4L77.7 122.8L76.0 125.9L72.8 122.8L67.5 119.0L61.2 119.6L55.3 119.0L50.6 118.5L45.3 116.8L41.1 114.3L38.8 110.5L37.3 110.3L39.6 115.8L42.0 119.2L45.3 120.6L48.1 118.7L50.6 121.3L53.8 121.5L57.2 124.7L53.4 129.5L48.7 133.7L44.5 136.9L38.2 140.7L32.2 142.2L30.8 136.9L27.6 130.6L23.4 123.2L19.1 116.8L14.9 112.6L12.4 109.0L14.9 104.5L13.9 99.6L11.7 97.5L6.5 97.1L1.8 95.4L1.2 91.8L8.6 88.6L17.0 88.6L19.1 86.9L22.3 85.2L27.6 87.8L31.8 86.9L37.3 84.8L38.6 82.7L35.6 80.2L31.4 78.9L30.8 75.5L34.4 72.5L38.2 70.0L42.0 70.9L45.8 70.0L45.8 67.1L42.8 65.8L40.3 64.3L42.8 62.8L41.1 59.5L39.2 53.7L38.2 47.4L39.0 42.1ZM37.3 89.9L42.8 91.6L43.6 94.9L41.1 97.5L37.7 96.2L35.6 92.8ZM47.9 80.2L50.0 79.7L51.3 82.3L50.4 84.8L48.3 84.8L47.2 82.3ZM54.6 24.0L59.3 23.5L65.6 25.6L70.3 26.9L67.7 27.8L61.4 26.5L56.1 25.6ZM110.7 30.5L117.0 30.3L123.4 31.1L127.6 32.0L122.3 32.6L116.0 32.0L111.7 31.6ZM158.2 66.4L161.4 68.5L165.6 73.8L168.8 78.0L169.8 80.6L167.7 79.7L164.6 75.5L161.0 71.3L158.4 67.9ZM169.2 83.1L174.1 81.8L179.6 80.2L180.8 82.3L177.7 85.9L174.1 88.2L170.5 87.3ZM172.4 89.0L176.2 91.1L178.3 96.0L177.7 100.9L173.2 103.4L169.0 104.9L166.3 106.6L165.2 109.1L162.9 108.3L162.7 104.7L163.5 101.7L167.3 100.0L170.7 98.3L172.0 94.9L170.9 91.6ZM165.2 113.1L166.3 113.5L165.2 117.3L164.1 116.9ZM188.4 64.5L192.0 65.2L192.0 66.0L188.9 65.6ZM201.5 68.1L204.7 69.2L204.5 70.0L201.5 69.2ZM154.0 119.6L155.5 120.4L155.1 124.2L153.8 123.8ZM136.0 128.0L139.0 127.6L139.4 130.6L137.3 131.8L135.6 130.2ZM111.1 141.6L112.4 141.6L112.4 145.8L111.1 145.8ZM117.0 156.4L120.2 157.6L123.4 161.2L127.2 165.4L130.8 169.7L133.9 173.9L134.4 176.6L131.8 176.0L128.0 172.4L124.4 168.2L120.8 163.3L118.1 159.1ZM133.5 178.1L137.1 177.5L141.3 178.7L146.6 180.2L151.3 181.7L155.5 182.3L155.1 183.8L150.4 183.4L145.5 182.3L140.3 181.3L135.0 180.2ZM156.1 182.3L159.3 181.7L162.4 181.3L161.8 183.0L158.2 184.5ZM161.4 185.5L164.6 183.4L168.2 181.3L168.8 183.0L165.2 185.1L161.8 186.8ZM139.8 164.4L143.4 162.3L146.6 159.1L149.8 155.5L152.9 153.4L156.1 156.4L155.1 160.2L154.6 164.4L152.9 168.2L150.4 171.8L146.6 172.8L142.4 171.8L140.3 168.6ZM157.2 167.5L159.3 164.4L162.4 164.0L165.6 163.3L165.2 165.4L161.8 166.5L160.3 169.0L163.1 171.8L162.4 174.9L160.3 173.9L158.9 171.1L157.6 176.0L156.1 174.9L156.7 170.7ZM155.5 132.7L158.2 132.3L159.3 135.9L158.9 139.0L161.0 142.2L163.1 144.3L161.8 145.8L159.3 143.3L157.2 140.1L155.9 136.5ZM162.4 145.4L164.6 147.5L165.2 150.0L167.3 151.3L167.7 154.2L165.6 155.5L163.9 153.4L161.8 151.7L160.3 149.2ZM152.5 150.0L156.1 145.8L157.2 146.4L153.8 150.9ZM169.8 162.3L171.5 162.7L171.1 167.5L169.8 168.2ZM168.8 171.8L174.1 172.4L175.1 173.9L169.8 173.3ZM180.0 151.7L181.3 151.7L181.3 153.0L180.0 153.0ZM177.9 157.2L179.1 157.2L179.1 158.5L177.9 158.5ZM180.0 176.6L181.7 177.1L181.3 179.6L180.0 178.7ZM174.5 179.6L176.2 179.6L176.2 181.3L174.5 181.3ZM91.4 149.2L93.5 150.6L94.4 153.8L92.7 155.5L91.0 153.4ZM47.0 142.2L49.4 142.2L48.9 143.7L47.2 143.5ZM79.8 164.4L81.0 164.4L81.0 165.6L79.8 165.6Z"/></g></svg></g></svg>
<div class="b num" style="left:9px;top:233.05px;width:12px">5</div>
<svg class="ic" style="left:7.300px;top:244.75px" width="10.400" height="10.400" viewBox="0 0 24 24"><g transform="rotate(-45 12 12)"><path fill="#444746" stroke="#444746" stroke-width="1.300" d="M3.900 12c0-1.710 1.390-3.100 3.100-3.100h4V7H7c-2.760 0-5 2.240-5 5s2.240 5 5 5h4v-1.900H7c-1.710 0-3.100-1.390-3.100-3.100zM8 13h8v-2H8v2zm9-6h-4v1.900h4c1.710 0 3.100 1.390 3.100 3.100s-1.390 3.100-3.100 3.100h-4V17h4c2.760 0 5-2.240 5-5s-2.240-5-5-5z"/></g></svg>
<svg class="ic" style="left:20px;top:228px" width="88" height="56" viewBox="0 0 88 56"><defs><clipPath id="tc5"><rect x="4.750" y="5.90" width="77.750" height="43.500" rx="3.600"/></clipPath></defs><rect x="3" y="4.25" width="80.750" height="46.600" rx="5.300" fill="#fff" stroke="#dfe1e5" stroke-width="1"/><g clip-path="url(#tc5)"><rect x="4" y="4.75" width="80" height="46" fill="#70b043"/><svg x="4.750" y="5.90" width="77.750" height="43.500" viewBox="0 0 777.500 435" preserveAspectRatio="none"><circle cx="60" cy="425" r="52" fill="#fff" opacity=".17"/><circle cx="162" cy="425" r="52" fill="#fff" opacity=".17"/><circle cx="264" cy="425" r="52" fill="#fff" opacity=".17"/><circle cx="366" cy="425" r="52" fill="#fff" opacity=".17"/><circle cx="468" cy="425" r="52" fill="#fff" opacity=".17"/><circle cx="570" cy="425" r="52" fill="#fff" opacity=".17"/><circle cx="672" cy="425" r="52" fill="#fff" opacity=".17"/><circle cx="774" cy="425" r="52" fill="#fff" opacity=".17"/><g fill="#fff" opacity=".8"><rect x="82.0" y="176" width="44" height="7"/><rect x="95.0" y="212" width="18" height="7"/><rect x="78.0" y="246" width="52" height="7"/></g><g fill="#fff" opacity=".8"><rect x="196.5" y="176" width="44" height="7"/><rect x="209.5" y="212" width="18" height="7"/><rect x="192.5" y="246" width="52" height="7"/></g><g fill="#fff" opacity=".8"><rect x="311.0" y="176" width="44" height="7"/><rect x="324.0" y="212" width="18" height="7"/><rect x="307.0" y="246" width="52" height="7"/></g><g fill="#fff" opacity=".8"><rect x="425.5" y="176" width="44" height="7"/><rect x="438.5" y="212" width="18" height="7"/><rect x="421.5" y="246" width="52" height="7"/></g><g fill="#fff" opacity=".8"><rect x="540.0" y="176" width="44" height="7"/><rect x="553.0" y="212" width="18" height="7"/><rect x="536.0" y="246" width="52" height="7"/></g><g fill="#fff" opacity=".8"><rect x="654.5" y="176" width="44" height="7"/><rect x="667.5" y="212" width="18" height="7"/><rect x="650.5" y="246" width="52" height="7"/></g><rect x="161.0" y="165" width="1.500" height="170" fill="#fff" opacity=".25"/><rect x="275.5" y="165" width="1.500" height="170" fill="#fff" opacity=".25"/><rect x="390.0" y="165" width="1.500" height="170" fill="#fff" opacity=".25"/><rect x="504.5" y="165" width="1.500" height="170" fill="#fff" opacity=".25"/><rect x="619.0" y="165" width="1.500" height="170" fill="#fff" opacity=".25"/><text x="42" y="70" font-size="27" fill="#fff" font-weight="bold" text-anchor="start" textLength="110" lengthAdjust="spacingAndGlyphs">History</text><rect x="42" y="120" width="680" height="9" fill="#fff" opacity="0.85"/><rect x="42" y="136" width="100" height="6" fill="#fff" opacity="0.7"/></svg></g></svg>
<div class="b num" style="left:9px;top:287.40px;width:12px">6</div>
<svg class="ic" style="left:7.300px;top:299.10px" width="10.400" height="10.400" viewBox="0 0 24 24"><g transform="rotate(-45 12 12)"><path fill="#444746" stroke="#444746" stroke-width="1.300" d="M3.900 12c0-1.710 1.390-3.100 3.100-3.100h4V7H7c-2.760 0-5 2.240-5 5s2.240 5 5 5h4v-1.900H7c-1.710 0-3.100-1.390-3.100-3.100zM8 13h8v-2H8v2zm9-6h-4v1.900h4c1.710 0 3.100 1.390 3.100 3.100s-1.390 3.100-3.100 3.100h-4V17h4c2.760 0 5-2.240 5-5s-2.240-5-5-5z"/></g></svg>
<svg class="ic" style="left:20px;top:283px" width="88" height="56" viewBox="0 0 88 56"><defs><clipPath id="tc6"><rect x="4.750" y="5.25" width="77.750" height="43.500" rx="3.600"/></clipPath></defs><rect x="3" y="3.60" width="80.750" height="46.600" rx="5.300" fill="#fff" stroke="#dfe1e5" stroke-width="1"/><g clip-path="url(#tc6)"><rect x="4" y="4.10" width="80" height="46" fill="#fff"/><svg x="4.750" y="5.25" width="77.750" height="43.500" viewBox="0 0 777.500 435" preserveAspectRatio="none"><path d="M22 6Q130 -8 236 14Q222 92 152 124Q96 96 22 6Z" fill="#a9d08e" stroke="#7ab55c" stroke-width="3" opacity=".6"/><path d="M0 34Q52 70 64 150Q40 200 0 214Z" fill="#f4b48a" stroke="#ee8a4c" stroke-width="3" opacity=".62"/><path d="M0 230Q20 250 22 300Q10 320 0 324Z" fill="#f3e9a6" opacity=".62"/><ellipse cx="109" cy="208" rx="78" ry="106" fill="#dcecee" stroke="#b9d7db" stroke-width="3" opacity=".95"/><path d="M109 104V312" stroke="#b9d7db" stroke-width="2" fill="none"/><ellipse cx="92" cy="370" rx="94" ry="72" fill="#f8c9a2" stroke="#f0a060" stroke-width="3" opacity=".66"/><text x="287" y="72" font-size="27" fill="#e8722b" font-weight="bold" text-anchor="start" textLength="226" lengthAdjust="spacingAndGlyphs">Interesting facts</text><rect x="287" y="128" width="445" height="8" fill="#a0522d" opacity="0.8"/><rect x="287" y="142" width="230" height="6" fill="#a0522d" opacity="0.6"/><rect x="308" y="170" width="410" height="7" fill="#c96a3a" opacity="0.6"/><rect x="308" y="190" width="226" height="7" fill="#c96a3a" opacity="0.6"/><rect x="308" y="210" width="420" height="7" fill="#c96a3a" opacity="0.6"/><rect x="308" y="227" width="420" height="7" fill="#c96a3a" opacity="0.6"/><rect x="308" y="244" width="420" height="7" fill="#c96a3a" opacity="0.6"/><rect x="308" y="261" width="84" height="7" fill="#c96a3a" opacity="0.6"/><rect x="308" y="284" width="420" height="7" fill="#c96a3a" opacity="0.6"/><rect x="308" y="302" width="252" height="7" fill="#c96a3a" opacity="0.6"/></svg></g></svg>
<div class="b num" style="left:9px;top:341.70px;width:12px">7</div>
<svg class="ic" style="left:7.300px;top:353.40px" width="10.400" height="10.400" viewBox="0 0 24 24"><g transform="rotate(-45 12 12)"><path fill="#444746" stroke="#444746" stroke-width="1.300" d="M3.900 12c0-1.710 1.390-3.100 3.100-3.100h4V7H7c-2.760 0-5 2.240-5 5s2.240 5 5 5h4v-1.900H7c-1.710 0-3.100-1.390-3.100-3.100zM8 13h8v-2H8v2zm9-6h-4v1.900h4c1.710 0 3.100 1.390 3.100 3.100s-1.390 3.100-3.100 3.100h-4V17h4c2.760 0 5-2.240 5-5s-2.240-5-5-5z"/></g></svg>
<svg class="ic" style="left:20px;top:337px" width="88" height="56" viewBox="0 0 88 56"><defs><clipPath id="tc7"><rect x="4.750" y="5.55" width="77.750" height="43.500" rx="3.600"/></clipPath></defs><rect x="3" y="3.90" width="80.750" height="46.600" rx="5.300" fill="#fff" stroke="#dfe1e5" stroke-width="1"/><g clip-path="url(#tc7)"><rect x="4" y="4.40" width="80" height="46" fill="#5ba3cf"/><svg x="4.750" y="5.55" width="77.750" height="43.500" viewBox="0 0 777.500 435" preserveAspectRatio="none"><g fill="none" stroke="#fff" stroke-opacity=".25" stroke-width="2.500"><path d="M340 0Q480 120 760 40"/><path d="M362 0Q486 117 756 44"/><path d="M384 0Q492 114 752 48"/><path d="M406 0Q498 111 748 52"/><path d="M428 0Q504 108 744 56"/><path d="M450 0Q510 105 740 60"/><path d="M472 0Q516 102 736 64"/><path d="M494 0Q522 99 732 68"/><path d="M516 0Q528 96 728 72"/></g><text x="42" y="72" font-size="27" fill="#fff" font-weight="bold" text-anchor="start" textLength="160" lengthAdjust="spacingAndGlyphs">Key people</text><rect x="42" y="122" width="350" height="9" fill="#fff" opacity="0.85"/><rect x="42" y="135" width="350" height="9" fill="#fff" opacity="0.85"/><rect x="392" y="126" width="110" height="8" fill="#fff" opacity="0.9"/><rect x="502" y="126" width="60" height="8" fill="#d7e04a"/><rect x="562" y="126" width="110" height="8" fill="#fff" opacity="0.9"/><rect x="92" y="196" width="100" height="100" fill="#2f7eb0"/><rect x="334" y="196" width="100" height="100" fill="#2f7eb0"/><rect x="576" y="196" width="100" height="100" fill="#2f7eb0"/><rect x="52" y="312" width="190" height="8" fill="#fff" opacity="0.85"/><rect x="52" y="332" width="190" height="8" fill="#fff" opacity="0.85"/><rect x="52" y="352" width="142" height="8" fill="#fff" opacity="0.85"/><rect x="290" y="312" width="190" height="8" fill="#fff" opacity="0.85"/><rect x="290" y="332" width="190" height="8" fill="#fff" opacity="0.85"/><rect x="290" y="352" width="142" height="8" fill="#fff" opacity="0.85"/><rect x="520" y="312" width="200" height="8" fill="#fff" opacity="0.85"/><rect x="520" y="332" width="200" height="8" fill="#fff" opacity="0.85"/><rect x="520" y="352" width="150" height="8" fill="#fff" opacity="0.85"/><rect x="72" y="308" width="95" height="6" fill="#d7e04a" opacity=".9"/><rect x="292" y="308" width="95" height="6" fill="#d7e04a" opacity=".9"/><rect x="530" y="308" width="95" height="6" fill="#d7e04a" opacity=".9"/></svg></g></svg>
<div class="b num" style="left:9px;top:396.10px;width:12px">8</div>
<svg class="ic" style="left:7.300px;top:407.80px" width="10.400" height="10.400" viewBox="0 0 24 24"><g transform="rotate(-45 12 12)"><path fill="#444746" stroke="#444746" stroke-width="1.300" d="M3.900 12c0-1.710 1.390-3.100 3.100-3.100h4V7H7c-2.760 0-5 2.240-5 5s2.240 5 5 5h4v-1.900H7c-1.710 0-3.100-1.390-3.100-3.100zM8 13h8v-2H8v2zm9-6h-4v1.900h4c1.710 0 3.100 1.390 3.100 3.100s-1.390 3.100-3.100 3.100h-4V17h4c2.760 0 5-2.240 5-5s-2.240-5-5-5z"/></g></svg>
<svg class="ic" style="left:20px;top:391px" width="88" height="56" viewBox="0 0 88 56"><defs><clipPath id="tc8"><rect x="4.750" y="5.95" width="77.750" height="43.500" rx="3.600"/></clipPath></defs><rect x="3" y="4.30" width="80.750" height="46.600" rx="5.300" fill="#fff" stroke="#dfe1e5" stroke-width="1"/><g clip-path="url(#tc8)"><rect x="4" y="4.80" width="80" height="46" fill="#e86c26"/><svg x="4.750" y="5.95" width="77.750" height="43.500" viewBox="0 0 777.500 435" preserveAspectRatio="none"><rect x="435" y="52" width="292" height="150" fill="#b34e14"/><rect x="435" y="228" width="292" height="150" fill="#b34e14"/><g fill="none" stroke="#fff" stroke-opacity=".22" stroke-width="3"><path d="M22 437Q80 350 200 350Q320 360 345 437"/><path d="M60 437L90 365"/><path d="M92 437L118 365"/><path d="M124 437L146 365"/><path d="M156 437L174 365"/><path d="M188 437L202 365"/><path d="M220 437L230 365"/><path d="M252 437L258 365"/><path d="M284 437L286 365"/><path d="M316 437L314 365"/></g><text x="52" y="76" font-size="27" fill="#fff" font-weight="bold" text-anchor="start" textLength="252" lengthAdjust="spacingAndGlyphs">Arts and literature</text><rect x="52" y="128" width="310" height="10" fill="#fff" opacity="0.95"/><rect x="52" y="141" width="310" height="10" fill="#fff" opacity="0.95"/><rect x="52" y="156" width="130" height="8" fill="#fff" opacity="0.9"/><rect x="72" y="186" width="90" height="8" fill="#fff" opacity="0.9"/><rect x="162" y="184" width="60" height="9" fill="#f0c33c"/><rect x="72" y="208" width="90" height="8" fill="#fff" opacity="0.9"/><rect x="162" y="206" width="60" height="9" fill="#f0c33c"/><rect x="72" y="236" width="100" height="8" fill="#fff" opacity="0.9"/><rect x="172" y="234" width="90" height="9" fill="#f0c33c"/></svg></g></svg>
<div class="b num" style="left:9px;top:450.55px;width:12px">9</div>
<svg class="ic" style="left:7.300px;top:462.25px" width="10.400" height="10.400" viewBox="0 0 24 24"><g transform="rotate(-45 12 12)"><path fill="#444746" stroke="#444746" stroke-width="1.300" d="M3.900 12c0-1.710 1.390-3.100 3.100-3.100h4V7H7c-2.760 0-5 2.240-5 5s2.240 5 5 5h4v-1.900H7c-1.710 0-3.100-1.390-3.100-3.100zM8 13h8v-2H8v2zm9-6h-4v1.900h4c1.710 0 3.100 1.390 3.100 3.100s-1.390 3.100-3.100 3.100h-4V17h4c2.760 0 5-2.240 5-5s-2.240-5-5-5z"/></g></svg>
<svg class="ic" style="left:20px;top:446px" width="88" height="56" viewBox="0 0 88 56"><defs><clipPath id="tc9"><rect x="4.750" y="5.40" width="77.750" height="43.500" rx="3.600"/></clipPath></defs><rect x="3" y="3.75" width="80.750" height="46.600" rx="5.300" fill="#fff" stroke="#dfe1e5" stroke-width="1"/><g clip-path="url(#tc9)"><rect x="4" y="4.25" width="80" height="46" fill="#fff"/><svg x="4.750" y="5.40" width="77.750" height="43.500" viewBox="0 0 777.500 435" preserveAspectRatio="none"><g fill="none" stroke="#7fc4b8" stroke-width="5" opacity="1" transform="translate(580 0)"><path d="M150 0Q20 110 20 260Q25 370 60 437"/><path d="M150 0Q160 220 175 437"/><path d="M155 110Q90 80 40 20"/><path d="M155 110Q200 70 250 0"/><path d="M157 155Q90 125 39 69"/><path d="M157 155Q200 115 250 45"/><path d="M159 200Q90 170 38 118"/><path d="M159 200Q200 160 250 90"/><path d="M161 245Q90 215 37 167"/><path d="M161 245Q200 205 250 135"/><path d="M163 290Q90 260 36 216"/><path d="M163 290Q200 250 250 180"/><path d="M165 335Q90 305 35 265"/><path d="M165 335Q200 295 250 225"/><path d="M167 380Q90 350 34 314"/><path d="M167 380Q200 340 250 270"/><path d="M169 425Q90 395 33 363"/><path d="M169 425Q200 385 250 315"/><path d="M171 470Q90 440 32 412"/><path d="M171 470Q200 430 250 360"/></g><text x="52" y="92" font-size="27" fill="#e8722b" font-weight="bold" text-anchor="start" textLength="256" lengthAdjust="spacingAndGlyphs">How we celebrate</text><rect x="52" y="150" width="360" height="6" fill="#a0522d" opacity="0.7"/><rect x="52" y="166" width="215" height="5" fill="#a0522d" opacity="0.6"/><rect x="72" y="194" width="60" height="6" fill="#c96a3a" opacity="0.6"/><rect x="132" y="190" width="190" height="10" fill="#eceb6c" opacity=".85"/><rect x="72" y="214" width="40" height="6" fill="#c96a3a" opacity="0.6"/><rect x="108" y="210" width="200" height="10" fill="#eceb6c" opacity=".85"/></svg></g></svg>
</div>
<div id="slide" class="b" style="left:192px;top:80.25px;width:766.5px;height:431.25px;background:#b2d8d4;overflow:hidden">
<svg class="ic" style="left:0;top:0" width="766.5" height="431.25" viewBox="0 0 766.5 431.25"><g opacity=".155" fill="none" stroke="#fff" stroke-linecap="round" stroke-linejoin="round"><path stroke-width="4.200" d="M-2.0 439.8Q1.9 430.2 9.8 417.4Q17.7 404.6 31.5 392.7Q45.3 380.9 58.2 372.0Q71.0 363.1 78.9 358.7Q86.8 354.2 101.6 346.9Q116.3 339.4 128.2 335.0Q140.0 330.6 155.8 327.6Q171.6 324.6 184.8 323.2Q198.0 321.8 209.9 323.1Q221.8 324.4 234.6 326.5Q247.4 328.6 260.2 331.1Q273.1 333.6 285.4 336.5Q297.7 339.4 311.0 343.9Q324.4 348.4 337.2 352.3Q350.0 356.2 362.9 360.7Q375.7 365.1 400.7 372.4"/><path stroke-width="4.800" d="M400.7 372.4Q394.3 385.1 390.5 392.7Q386.7 400.4 382.9 407.3Q379.1 414.2 370.0 434.8"/><path stroke-width="4.400" d="M166.0 435.8Q188.0 423.8 198.0 419.6Q208.0 415.6 223.8 408.6Q239.7 401.6 255.5 395.9Q271.4 390.1 287.2 385.7Q303.1 381.2 319.6 377.6Q336.0 373.9 348.7 372.9Q361.4 371.8 374.1 372.1Q386.7 372.4 396.0 375.2"/><path stroke-width="4.400" d="M210.0 435.8Q218.1 431.8 232.1 426.8Q246.0 421.9 258.7 417.4Q271.4 412.9 287.2 407.2Q303.1 401.6 319.6 395.9Q336.0 390.1 342.4 387.6Q348.7 385.1 361.4 382.6Q374.0 380.1 394.0 378.6"/><path stroke-width="3.600" d="M45.3 381.9Q37.4 402.6 28.5 433.8"/><path stroke-width="3.600" d="M67.0 366.1Q61.1 394.8 58.0 433.8"/><path stroke-width="3.600" d="M83.8 356.2Q81.8 388.8 82.8 433.8"/><path stroke-width="3.600" d="M136.1 333.6Q116.3 359.1 111.4 374.9Q106.5 390.8 102.3 433.8"/><path stroke-width="3.600" d="M173.5 325.6Q155.8 355.2 151.8 373.0Q147.9 390.8 137.0 433.8"/><path stroke-width="3.600" d="M201.2 322.1Q198.0 335.6 191.7 357.2Q185.4 378.9 158.0 433.8"/><path stroke-width="3.600" d="M221.8 327.6Q215.9 349.4 211.9 360.2Q208.0 371.1 203.0 380.9Q198.0 390.8 173.5 433.8"/><path stroke-width="3.600" d="M247.4 329.6Q237.6 359.1 229.2 375.3Q220.7 391.4 208.0 410.4"/><path stroke-width="3.600" d="M273.1 334.6Q263.2 365.1 255.6 376.4Q248.0 387.8 239.7 400.4"/><path stroke-width="3.600" d="M297.7 340.4Q286.9 369.1 271.4 388.9"/><path stroke-width="3.600" d="M324.4 349.4Q314.5 367.1 304.0 379.2"/><path stroke-width="3.600" d="M350.0 357.2Q344.1 365.1 334.0 372.2"/><path stroke-width="3.600" d="M384.2 383.1L390.5 385.8"/><path stroke-width="3.600" d="M346.2 390.1Q358.8 393.4 366.4 396.9Q374.0 400.4 382.5 404.8"/><path stroke-width="3.600" d="M309.4 400.4Q322.0 401.6 329.0 404.1Q336.0 406.8 344.5 411.8Q353.0 416.8 368.0 431.8"/><path stroke-width="3.600" d="M290.4 406.6Q303.0 404.1 312.5 407.3Q322.0 410.4 329.0 414.9Q336.0 419.4 351.0 433.8"/><path stroke-width="3.600" d="M271.4 412.9Q284.0 410.4 293.5 414.9Q303.0 419.4 322.0 433.8"/><path stroke-width="3.600" d="M249.8 421.9Q265.0 419.4 274.5 423.8Q284.0 428.1 291.0 433.8"/></g></svg>
</div>
<span class="t ttl" style="left:246.20px;top:129.99px;font-size:30.38px;line-height:30.38px;color:#e8722b;-webkit-text-stroke:.45px #e8722b;">Geography</span>
<div id="para-left" class="b para" style="left:246.3px;top:204.11px;width:209.5px;font-size:13.3px;line-height:16.07px">
<div class="jl">The vast continent of Asia</div>
<div class="jl">unfurls across a detailed map,</div>
<div class="jl">its colorful borders outlining a</div>
<div class="jl">tapestry of nations. From the</div>
<div class="jl">towering Himalayas to the</div>
<div class="jl">island archipelagos of Southeast</div>
<div class="jl">Asia, mountains, rivers, and</div>
<div class="jl">seascapes come alive. Zoom in</div>
<div class="jl">to discover bustling megacities,</div>
<div class="jl">ancient cultural landmarks, and</div>
<div class="jl">the rich geographical diversity</div>
<div class="jl">that defines this extraordinary</div>
<div class="jl last">continent.</div>
</div>
<div id="map" class="b" style="left:470.1px;top:199px;width:210.9px;height:210.5px;background:#72b8b0"><svg class="ic" style="left:0;top:0" width="210.9" height="210.5"><path fill="#7f0000" fill-rule="evenodd" stroke="#7f0000" stroke-width=".7" stroke-linejoin="round" d="M40.3 35.8L44.5 35.4L48.7 36.2L54.0 33.7L59.3 30.5L65.6 29.0L72.0 29.0L80.4 29.9L84.6 31.1L86.7 33.7L95.2 34.5L102.2 34.1L108.6 36.2L117.0 36.2L123.4 35.8L131.8 37.1L140.3 37.9L148.7 39.0L157.2 40.4L165.6 41.1L174.1 40.4L179.4 43.8L184.6 48.0L190.5 51.6L186.7 53.1L182.5 54.8L178.3 55.2L177.2 58.0L180.4 61.1L182.5 64.3L183.6 69.6L182.5 72.8L179.4 68.5L175.8 64.3L173.0 61.1L172.4 56.9L173.0 53.7L169.8 52.7L166.7 54.4L164.6 57.3L159.3 58.0L152.9 57.3L149.8 59.0L147.7 64.3L151.9 66.4L157.2 65.8L161.4 69.6L164.6 73.8L163.5 78.0L162.4 82.3L159.3 85.4L156.1 87.5L157.2 90.7L159.3 93.9L161.4 98.1L160.3 102.3L157.2 103.4L155.1 99.2L152.9 94.9L150.8 92.8L146.6 93.9L145.5 90.7L142.4 91.8L140.3 94.9L143.4 97.5L147.7 99.6L151.3 104.5L153.4 110.5L152.5 115.4L149.8 120.4L146.2 124.2L141.3 126.8L137.7 126.8L136.0 129.5L133.9 127.4L130.8 125.9L127.6 128.0L129.7 130.6L132.9 133.7L136.5 138.0L139.2 143.3L138.2 146.4L135.0 148.5L132.9 150.0L130.8 147.5L129.7 144.3L127.6 141.1L124.4 139.0L122.3 136.9L120.8 140.1L121.3 144.3L122.9 148.5L125.5 152.8L128.0 156.4L130.1 160.2L131.4 164.0L129.3 163.5L126.5 160.2L123.8 155.9L121.7 151.7L120.2 147.1L118.7 142.2L118.1 137.3L116.6 134.8L113.9 135.9L111.7 132.7L109.6 128.9L107.9 123.8L104.7 125.3L100.5 127.4L96.9 132.3L93.5 136.5L92.2 141.1L90.5 147.9L88.0 151.7L84.6 146.4L81.3 140.1L78.3 132.7L77.0 127.4L77.7 122.8L76.0 125.9L72.8 122.8L67.5 119.0L61.2 119.6L55.3 119.0L50.6 118.5L45.3 116.8L41.1 114.3L38.8 110.5L37.3 110.3L39.6 115.8L42.0 119.2L45.3 120.6L48.1 118.7L50.6 121.3L53.8 121.5L57.2 124.7L53.4 129.5L48.7 133.7L44.5 136.9L38.2 140.7L32.2 142.2L30.8 136.9L27.6 130.6L23.4 123.2L19.1 116.8L14.9 112.6L12.4 109.0L14.9 104.5L13.9 99.6L11.7 97.5L6.5 97.1L1.8 95.4L1.2 91.8L8.6 88.6L17.0 88.6L19.1 86.9L22.3 85.2L27.6 87.8L31.8 86.9L37.3 84.8L38.6 82.7L35.6 80.2L31.4 78.9L30.8 75.5L34.4 72.5L38.2 70.0L42.0 70.9L45.8 70.0L45.8 67.1L42.8 65.8L40.3 64.3L42.8 62.8L41.1 59.5L39.2 53.7L38.2 47.4L39.0 42.1ZM37.3 89.9L42.8 91.6L43.6 94.9L41.1 97.5L37.7 96.2L35.6 92.8ZM47.9 80.2L50.0 79.7L51.3 82.3L50.4 84.8L48.3 84.8L47.2 82.3ZM54.6 24.0L59.3 23.5L65.6 25.6L70.3 26.9L67.7 27.8L61.4 26.5L56.1 25.6ZM110.7 30.5L117.0 30.3L123.4 31.1L127.6 32.0L122.3 32.6L116.0 32.0L111.7 31.6ZM158.2 66.4L161.4 68.5L165.6 73.8L168.8 78.0L169.8 80.6L167.7 79.7L164.6 75.5L161.0 71.3L158.4 67.9ZM169.2 83.1L174.1 81.8L179.6 80.2L180.8 82.3L177.7 85.9L174.1 88.2L170.5 87.3ZM172.4 89.0L176.2 91.1L178.3 96.0L177.7 100.9L173.2 103.4L169.0 104.9L166.3 106.6L165.2 109.1L162.9 108.3L162.7 104.7L163.5 101.7L167.3 100.0L170.7 98.3L172.0 94.9L170.9 91.6ZM165.2 113.1L166.3 113.5L165.2 117.3L164.1 116.9ZM188.4 64.5L192.0 65.2L192.0 66.0L188.9 65.6ZM201.5 68.1L204.7 69.2L204.5 70.0L201.5 69.2ZM154.0 119.6L155.5 120.4L155.1 124.2L153.8 123.8ZM136.0 128.0L139.0 127.6L139.4 130.6L137.3 131.8L135.6 130.2ZM111.1 141.6L112.4 141.6L112.4 145.8L111.1 145.8ZM117.0 156.4L120.2 157.6L123.4 161.2L127.2 165.4L130.8 169.7L133.9 173.9L134.4 176.6L131.8 176.0L128.0 172.4L124.4 168.2L120.8 163.3L118.1 159.1ZM133.5 178.1L137.1 177.5L141.3 178.7L146.6 180.2L151.3 181.7L155.5 182.3L155.1 183.8L150.4 183.4L145.5 182.3L140.3 181.3L135.0 180.2ZM156.1 182.3L159.3 181.7L162.4 181.3L161.8 183.0L158.2 184.5ZM161.4 185.5L164.6 183.4L168.2 181.3L168.8 183.0L165.2 185.1L161.8 186.8ZM139.8 164.4L143.4 162.3L146.6 159.1L149.8 155.5L152.9 153.4L156.1 156.4L155.1 160.2L154.6 164.4L152.9 168.2L150.4 171.8L146.6 172.8L142.4 171.8L140.3 168.6ZM157.2 167.5L159.3 164.4L162.4 164.0L165.6 163.3L165.2 165.4L161.8 166.5L160.3 169.0L163.1 171.8L162.4 174.9L160.3 173.9L158.9 171.1L157.6 176.0L156.1 174.9L156.7 170.7ZM155.5 132.7L158.2 132.3L159.3 135.9L158.9 139.0L161.0 142.2L163.1 144.3L161.8 145.8L159.3 143.3L157.2 140.1L155.9 136.5ZM162.4 145.4L164.6 147.5L165.2 150.0L167.3 151.3L167.7 154.2L165.6 155.5L163.9 153.4L161.8 151.7L160.3 149.2ZM152.5 150.0L156.1 145.8L157.2 146.4L153.8 150.9ZM169.8 162.3L171.5 162.7L171.1 167.5L169.8 168.2ZM168.8 171.8L174.1 172.4L175.1 173.9L169.8 173.3ZM180.0 151.7L181.3 151.7L181.3 153.0L180.0 153.0ZM177.9 157.2L179.1 157.2L179.1 158.5L177.9 158.5ZM180.0 176.6L181.7 177.1L181.3 179.6L180.0 178.7ZM174.5 179.6L176.2 179.6L176.2 181.3L174.5 181.3ZM91.4 149.2L93.5 150.6L94.4 153.8L92.7 155.5L91.0 153.4ZM47.0 142.2L49.4 142.2L48.9 143.7L47.2 143.5ZM79.8 164.4L81.0 164.4L81.0 165.6L79.8 165.6Z"/></svg></div>
<div id="sel">
<div class="b" style="left:701.70px;top:208.90px;width:198.30px;height:16.10px;background:#a6bfba;"></div>
<div class="b" style="left:701.70px;top:224.95px;width:180.90px;height:16.10px;background:#a6bfba;"></div>
<div class="b" style="left:701.70px;top:241.00px;width:202.50px;height:16.10px;background:#a6bfba;"></div>
<div class="b" style="left:701.70px;top:257.05px;width:202.50px;height:16.10px;background:#a6bfba;"></div>
<div class="b" style="left:701.70px;top:273.10px;width:192.20px;height:16.10px;background:#a6bfba;"></div>
<div class="b" style="left:701.70px;top:289.15px;width:185.20px;height:16.10px;background:#a6bfba;"></div>
<div class="b" style="left:701.70px;top:305.20px;width:208.10px;height:16.10px;background:#a6bfba;"></div>
<div class="b" style="left:701.70px;top:321.25px;width:173.90px;height:16.10px;background:#a6bfba;"></div>
<div class="b" style="left:701.70px;top:337.30px;width:197.30px;height:16.10px;background:#a6bfba;"></div>
<div class="b" style="left:701.70px;top:353.35px;width:207.70px;height:16.10px;background:#a6bfba;"></div>
<div class="b" style="left:701.70px;top:369.40px;width:186.60px;height:16.10px;background:#a6bfba;"></div>
<div class="b" style="left:701.70px;top:385.45px;width:151.40px;height:16.10px;background:#a6bfba;"></div>
<div class="b" style="left:701.70px;top:401.50px;width:131.70px;height:16.10px;background:#a6bfba;"></div>
<span class="t rp" style="left:702.20px;top:210.26px;font-size:13.40px;line-height:13.40px;color:#4a8c87;font-weight:bold;letter-spacing:0.060px;">Unveiling a world on a page, a</span>
<span class="t rp" style="left:702.20px;top:226.33px;font-size:13.40px;line-height:13.40px;color:#4a8c87;font-weight:bold;letter-spacing:-0.043px;">map of Asia stretches out, a</span>
<span class="t rp" style="left:702.20px;top:242.40px;font-size:13.40px;line-height:13.40px;color:#4a8c87;font-weight:bold;letter-spacing:-0.008px;">giant landmass cradled by vast</span>
<span class="t rp" style="left:702.20px;top:258.47px;font-size:13.40px;line-height:13.40px;color:#4a8c87;font-weight:bold;letter-spacing:0.075px;">oceans. Its intricate network of</span>
<span class="t rp" style="left:702.20px;top:274.54px;font-size:13.40px;line-height:13.40px;color:#4a8c87;font-weight:bold;letter-spacing:0.010px;">lines separates a multitude of</span>
<span class="t rp" style="left:702.20px;top:290.61px;font-size:13.40px;line-height:13.40px;color:#4a8c87;font-weight:bold;letter-spacing:0.089px;">countries, each with its own</span>
<span class="t rp" style="left:702.20px;top:306.68px;font-size:13.40px;line-height:13.40px;color:#4a8c87;font-weight:bold;letter-spacing:0.145px;">vibrant culture and history.  We</span>
<span class="t rp" style="left:702.20px;top:322.75px;font-size:13.40px;line-height:13.40px;color:#4a8c87;font-weight:bold;letter-spacing:0.035px;">see the stark beauty of the</span>
<span class="t rp" style="left:702.20px;top:338.82px;font-size:13.40px;line-height:13.40px;color:#4a8c87;font-weight:bold;letter-spacing:0.044px;">wrinkled mountain ranges like</span>
<span class="t rp" style="left:702.20px;top:354.89px;font-size:13.40px;line-height:13.40px;color:#4a8c87;font-weight:bold;letter-spacing:0.069px;">the Himalayas, contrasting with</span>
<span class="t rp" style="left:702.20px;top:370.96px;font-size:13.40px;line-height:13.40px;color:#4a8c87;font-weight:bold;letter-spacing:0.054px;">the delicate tracery of island</span>
<span class="t rp" style="left:702.20px;top:387.03px;font-size:13.40px;line-height:13.40px;color:#4a8c87;font-weight:bold;letter-spacing:-0.165px;">chains snaking through</span>
<span class="t rp" style="left:702.20px;top:403.10px;font-size:13.40px;line-height:13.40px;color:#4a8c87;font-weight:bold;letter-spacing:0.050px;">turquoise waters.</span>
</div>
<div class="b" style="left:694.00px;top:200.25px;width:227.25px;height:277.65px;border:1px solid #4c8df6;box-sizing:border-box;"></div>
<div class="b" style="left:807.00px;top:189.00px;width:1.00px;height:11.50px;background:#4c8df6;"></div>
<div class="b" style="left:805.40px;top:185.90px;width:4.20px;height:4.20px;background:#1a73e8;border-radius:2.1px;"></div>
<div class="b" style="left:692.70px;top:198.95px;width:3.60px;height:3.60px;background:#1a73e8;"></div>
<div class="b" style="left:805.70px;top:198.95px;width:3.60px;height:3.60px;background:#1a73e8;"></div>
<div class="b" style="left:918.95px;top:198.95px;width:3.60px;height:3.60px;background:#1a73e8;"></div>
<div class="b" style="left:692.70px;top:337.20px;width:3.60px;height:3.60px;background:#1a73e8;"></div>
<div class="b" style="left:918.95px;top:337.20px;width:3.60px;height:3.60px;background:#1a73e8;"></div>
<div class="b" style="left:692.70px;top:475.60px;width:3.60px;height:3.60px;background:#1a73e8;"></div>
<div class="b" style="left:805.70px;top:475.60px;width:3.60px;height:3.60px;background:#1a73e8;"></div>
<div class="b" style="left:918.95px;top:475.60px;width:3.60px;height:3.60px;background:#1a73e8;"></div>
<div class="b" style="left:673.80px;top:459.80px;width:16.80px;height:17.20px;background:#fff;border-radius:4px;box-shadow:0 0 2px rgba(0,0,0,.3);"></div>
<svg class="ic" style="left:677px;top:463px" width="11" height="11" viewBox="0 0 11 11"><g stroke="#5f6368" stroke-width="1" fill="none"><path d="M1 3.500H7M1 5.500H10M1 7.500H10M1.500 1.500L9.500 9.500"/></g></svg>
<div id="dropdown">
<div class="b" style="left:638.50px;top:53.50px;width:61.50px;height:33.30px;background:#edf2fa;border-radius:3px;box-shadow:0 1px 3px rgba(0,0,0,.3);"></div>
<div class="b" style="left:641.30px;top:56.50px;width:13.70px;height:27.50px;background:#d3e3fd;border-radius:1.5px;"></div>
<div class="b" style="left:683.30px;top:57.00px;width:13.20px;height:13.00px;background:#dde2e9;border-radius:1.5px;"></div>
<svg class="ic" style="left:643.25px;top:58.75px" width="10.5" height="10.5" viewBox="0 0 24 24" ><path fill="#1b3a78" d="M15 15H3v2h12v-2zm0-8H3v2h12V7zM3 13h18v-2H3v2zm0 8h18v-2H3v2zM3 3v2h18V3H3z"/></svg>
<svg class="ic" style="left:657.05px;top:58.75px" width="10.5" height="10.5" viewBox="0 0 24 24" ><path fill="#444746" d="M7 15v2h10v-2H7zm-4 6h18v-2H3v2zm0-8h18v-2H3v2zm4-6v2h10V7H7zM3 3v2h18V3H3z"/></svg>
<svg class="ic" style="left:671.05px;top:58.75px" width="10.5" height="10.5" viewBox="0 0 24 24" ><path fill="#444746" d="M3 21h18v-2H3v2zm6-4h12v-2H9v2zm-6-4h18v-2H3v2zm6-4h12V7H9v2zM3 3v2h18V3H3z"/></svg>
<svg class="ic" style="left:684.75px;top:58.75px" width="10.5" height="10.5" viewBox="0 0 24 24" ><path fill="#444746" d="M3 21h18v-2H3v2zm0-4h18v-2H3v2zm0-4h18v-2H3v2zm0-4h18V7H3v2zm0-6v2h18V3H3z"/></svg>
<svg class="ic" style="left:643.25px;top:72.75px" width="10.5" height="10.5" viewBox="0 0 24 24" ><path fill="#1b3a78" d="M8 11h3v10h2V11h3l-4-4-4 4zM4 3v2h16V3H4z"/></svg>
<svg class="ic" style="left:657.05px;top:72.75px" width="10.5" height="10.5" viewBox="0 0 24 24" ><path fill="#444746" d="M8 19h3v4h2v-4h3l-4-4-4 4zm8-14h-3V1h-2v4H8l4 4 4-4zM4 11v2h16v-2H4z"/></svg>
<svg class="ic" style="left:671.05px;top:72.75px" width="10.5" height="10.5" viewBox="0 0 24 24" ><path fill="#444746" d="M16 13h-3V3h-2v10H8l4 4 4-4zM4 19v2h16v-2H4z"/></svg>
</div>
<div class="b" style="left:695.30px;top:70.30px;width:26.20px;height:12.50px;background:#fff;border:1px solid #6f6f6f;box-sizing:border-box;box-shadow:0 1px 2px rgba(0,0,0,.25);"></div>
<span class="t" style="left:700.30px;top:74.22px;font-size:6.00px;line-height:6.00px;color:#5f6368;">Justify</span>
<svg class="ic" style="left:0;top:0;filter:drop-shadow(0 1px 1.5px rgba(0,0,0,.35))" width="1024" height="568" viewBox="0 0 1024 568">
<rect x="635.600" y="52.100" width="92" height="42.500" rx="4" ry="4" fill="none" stroke="#1a5fe6" stroke-width="2.800"/>
<path d="M711 85L727.300 95.200L722.400 97L769.200 201.300L768 201.800L715.300 100L711.500 102.600Z" fill="#1a5fe6"/>
</svg>
<div class="b" style="left:558.00px;top:521.50px;width:25.00px;height:1.00px;background:#5f6368;"></div>
<div class="b" style="left:126.00px;top:534.00px;width:889.50px;height:25.50px;background:#edf2fa;border-radius:5px 4px 4px 5px;"></div>
<span class="t" style="left:134.50px;top:541.09px;font-size:7.81px;line-height:7.81px;color:#1f1f1f;">Click to add speaker notes</span>
<svg class="ic" style="left:13.60px;top:543.40px" width="11" height="11" viewBox="0 0 24 24" ><path fill="#444746" d="M3 3v8h8V3H3zm6 6H5V5h4v4zm-6 4v8h8v-8H3zm6 6H5v-4h4v4zm4-16v8h8V3h-8zm6 6h-4V5h4v4zm-6 4v8h8v-8h-8zm6 6h-4v-4h4v4z"/></svg>
<svg class="ic" style="left:39.50px;top:543.50px" width="11" height="11" viewBox="0 0 24 24" ><path fill="#444746" d="M15.410 7.410L14 6l-6 6 6 6 1.410-1.410L10.830 12z"/></svg>
<div class="b" style="left:1011.50px;top:544.00px;width:18.50px;height:18.50px;background:#fff;border-radius:9.3px;box-shadow:0 0 2px rgba(0,0,0,.35);"></div>
<svg class="ic" style="left:1016.50px;top:549.30px" width="8" height="8" viewBox="0 0 24 24" ><path fill="#444746" d="M15.410 7.410L14 6l-6 6 6 6 1.410-1.410L10.830 12z"/></svg>
</div>
</body></html>
